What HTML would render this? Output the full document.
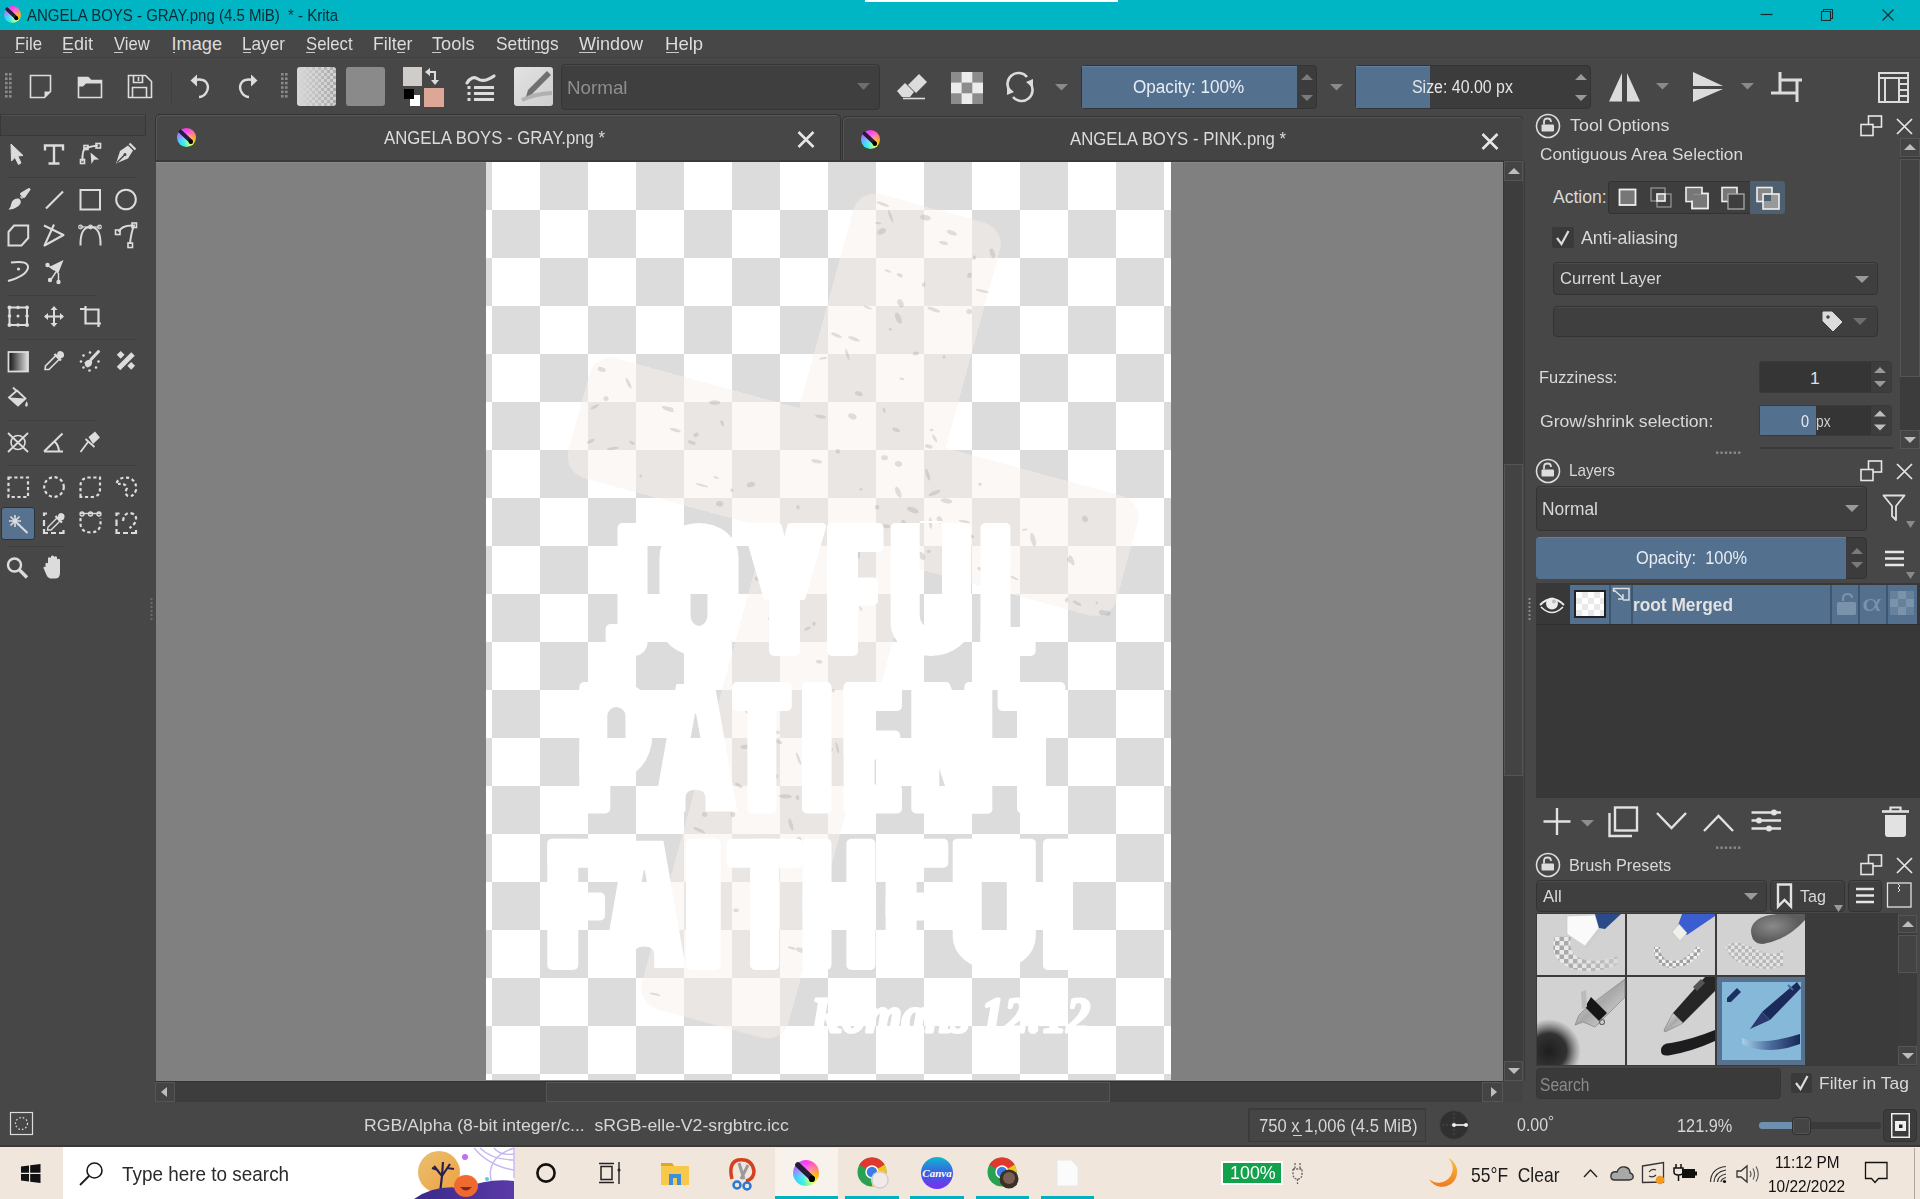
<!DOCTYPE html>
<html><head><meta charset="utf-8">
<style>
*{margin:0;padding:0;box-sizing:border-box}
html,body{width:1920px;height:1199px;overflow:hidden;background:#474747;font-family:"Liberation Sans",sans-serif;color:#dedede;position:relative}
.a{position:absolute}
svg{position:absolute;overflow:visible}
.t{position:absolute;white-space:pre;line-height:1;transform-origin:0 0}
</style></head><body>
<div class="a" style="left:0px;top:0px;width:1920px;height:30px;background:#00b6c4;"></div>
<div class="a" style="left:865px;top:0px;width:253px;height:2px;background:#ffffff;"></div>
<div class="a" style="left:0px;top:30px;width:1920px;height:84px;background:#474747;"></div>
<div class="a" style="left:0px;top:57px;width:1920px;height:1px;background:#404040;"></div>
<div class="a" style="left:3.5px;top:6.0px;width:17.0px;height:17.0px;border-radius:50%;background:conic-gradient(from 0deg,#ff38f0 0deg,#ff7a90 60deg,#ffc000 110deg,#f0ff60 140deg,#30f0e0 200deg,#40d0ff 240deg,#9a80ff 290deg,#ff38f0 360deg)"></div>
<div class="a" style="left:3.5px;top:6.0px;width:17.0px;height:17.0px;border-radius:50%;background:radial-gradient(circle at 50% 50%,rgba(255,255,255,.35),rgba(255,255,255,0) 60%)"></div>
<svg style="left:-0.5px;top:2.0px;" width="25.0" height="25.0" viewBox="0 0 25.0 25.0"><path d="M7.2 7.2 L16.3 15.9" stroke="#2a1a3a" stroke-width="3.57" stroke-linecap="round"/><circle cx="16.3" cy="16.3" r="2.04" fill="#000"/></svg>
<div class="t" style="left:27.00px;top:7.86px;font-size:16.7px;color:#0a2a33;font-weight:400;font-family:'Liberation Sans',sans-serif;transform:scaleX(0.8983);">ANGELA BOYS - GRAY.png (4.5 MiB)  * - Krita</div>
<svg style="left:1755px;top:0px;" width="150" height="30" viewBox="0 0 150 30"><path d="M5.5 14.5H17.5" stroke="#1a2a30" stroke-width="1.2"/>
<path d="M66.5 11.5h9v9h-9z M68.5 11.5v-2h9v9h-2" fill="none" stroke="#1a2a30" stroke-width="1.1"/>
<path d="M127.5 9.5L138.5 20.5M138.5 9.5L127.5 20.5" stroke="#1a2a30" stroke-width="1.2"/></svg>
<div class="t" style="left:15.08px;top:34.79px;font-size:18.2px;color:#dcdcdc;font-weight:400;font-family:'Liberation Sans',sans-serif;transform:scaleX(0.9223);">File</div>
<div class="t" style="left:62.01px;top:34.79px;font-size:18.2px;color:#dcdcdc;font-weight:400;font-family:'Liberation Sans',sans-serif;transform:scaleX(0.9905);">Edit</div>
<div class="t" style="left:114.00px;top:34.79px;font-size:18.2px;color:#dcdcdc;font-weight:400;font-family:'Liberation Sans',sans-serif;transform:scaleX(0.9135);">View</div>
<div class="t" style="left:171.50px;top:34.79px;font-size:18.2px;color:#dcdcdc;font-weight:400;font-family:'Liberation Sans',sans-serif;">Image</div>
<div class="t" style="left:242.05px;top:34.79px;font-size:18.2px;color:#dcdcdc;font-weight:400;font-family:'Liberation Sans',sans-serif;transform:scaleX(0.9451);">Layer</div>
<div class="t" style="left:306.00px;top:34.79px;font-size:18.2px;color:#dcdcdc;font-weight:400;font-family:'Liberation Sans',sans-serif;transform:scaleX(0.9209);">Select</div>
<div class="t" style="left:373.02px;top:34.79px;font-size:18.2px;color:#dcdcdc;font-weight:400;font-family:'Liberation Sans',sans-serif;transform:scaleX(0.9782);">Filter</div>
<div class="t" style="left:432.00px;top:34.79px;font-size:18.2px;color:#dcdcdc;font-weight:400;font-family:'Liberation Sans',sans-serif;transform:scaleX(1.0032);">Tools</div>
<div class="t" style="left:495.50px;top:34.79px;font-size:18.2px;color:#dcdcdc;font-weight:400;font-family:'Liberation Sans',sans-serif;transform:scaleX(0.9524);">Settings</div>
<div class="t" style="left:579.00px;top:34.79px;font-size:18.2px;color:#dcdcdc;font-weight:400;font-family:'Liberation Sans',sans-serif;transform:scaleX(0.9916);">Window</div>
<div class="t" style="left:664.98px;top:34.79px;font-size:18.2px;color:#dcdcdc;font-weight:400;font-family:'Liberation Sans',sans-serif;transform:scaleX(1.0196);">Help</div>
<div class="a" style="left:15px;top:52px;width:9px;height:1px;background:#c8c8c8;"></div>
<div class="a" style="left:63px;top:52px;width:9px;height:1px;background:#c8c8c8;"></div>
<div class="a" style="left:114px;top:52px;width:9px;height:1px;background:#c8c8c8;"></div>
<div class="a" style="left:173px;top:52px;width:2px;height:1px;background:#c8c8c8;"></div>
<div class="a" style="left:243px;top:52px;width:8px;height:1px;background:#c8c8c8;"></div>
<div class="a" style="left:306px;top:52px;width:9px;height:1px;background:#c8c8c8;"></div>
<div class="a" style="left:397px;top:52px;width:8px;height:1px;background:#c8c8c8;"></div>
<div class="a" style="left:432px;top:52px;width:9px;height:1px;background:#c8c8c8;"></div>
<div class="a" style="left:535px;top:52px;width:10px;height:1px;background:#c8c8c8;"></div>
<div class="a" style="left:579px;top:52px;width:17px;height:1px;background:#c8c8c8;"></div>
<div class="a" style="left:666px;top:52px;width:13px;height:1px;background:#c8c8c8;"></div>
<svg style="left:5px;top:73px;" width="10" height="28" viewBox="0 0 10 28"><rect x="0" y="0.0" width="2.6" height="2.6" fill="#8a8a8a"/><rect x="4" y="0.0" width="2.6" height="2.6" fill="#8a8a8a"/><rect x="0" y="4.4" width="2.6" height="2.6" fill="#8a8a8a"/><rect x="4" y="4.4" width="2.6" height="2.6" fill="#8a8a8a"/><rect x="0" y="8.8" width="2.6" height="2.6" fill="#8a8a8a"/><rect x="4" y="8.8" width="2.6" height="2.6" fill="#8a8a8a"/><rect x="0" y="13.2" width="2.6" height="2.6" fill="#8a8a8a"/><rect x="4" y="13.2" width="2.6" height="2.6" fill="#8a8a8a"/><rect x="0" y="17.6" width="2.6" height="2.6" fill="#8a8a8a"/><rect x="4" y="17.6" width="2.6" height="2.6" fill="#8a8a8a"/><rect x="0" y="22.0" width="2.6" height="2.6" fill="#8a8a8a"/><rect x="4" y="22.0" width="2.6" height="2.6" fill="#8a8a8a"/></svg>
<svg style="left:29px;top:74px;" width="24" height="26" viewBox="0 0 24 26"><path d="M1.5 1.5H21.5V17.5L15.5 23.5H1.5Z" fill="none" stroke="#dcdcdc" stroke-width="1.6"/><path d="M21.5 17.5H15.5V23.5Z" fill="#dcdcdc"/></svg>
<svg style="left:77px;top:74px;" width="26" height="26" viewBox="0 0 26 26"><path d="M1.5 3.5H11L14 6.5H24.5V23.5H1.5Z" fill="none" stroke="#dcdcdc" stroke-width="1.6"/><path d="M1.5 3.5H11L14 6.5H24.5V9.5H9L6 12.5H1.5Z" fill="#dcdcdc"/></svg>
<svg style="left:127px;top:74px;" width="26" height="26" viewBox="0 0 26 26"><path d="M1.5 1.5H18.5L24.5 7.5V23.5H1.5Z" fill="none" stroke="#dcdcdc" stroke-width="1.6"/><path d="M6.5 1.5V8.5H15.5V1.5M11.5 3V7M5.5 23.5V13.5H19.5V23.5" fill="none" stroke="#dcdcdc" stroke-width="1.6"/></svg>
<div class="a" style="left:171px;top:72px;width:1px;height:31px;background:#3e3e3e;"></div>
<svg style="left:189px;top:72px;" width="24" height="28" viewBox="0 0 24 28"><path d="M4 8.5 Q13 6 17 10 Q21 15 17 21 Q14 25 10 25" fill="none" stroke="#dcdcdc" stroke-width="2.4"/><path d="M1.5 8.5L8 2.5V14.5Z" fill="#dcdcdc"/></svg>
<svg style="left:237px;top:72px;" width="24" height="28" viewBox="0 0 24 28"><path d="M18 8.5 Q9 6 5 10 Q1 15 5 21 Q8 25 12 25" fill="none" stroke="#dcdcdc" stroke-width="2.4"/><path d="M20.5 8.5L14 2.5V14.5Z" fill="#dcdcdc"/></svg>
<svg style="left:281px;top:73px;" width="10" height="28" viewBox="0 0 10 28"><rect x="0" y="0.0" width="2.6" height="2.6" fill="#8a8a8a"/><rect x="4" y="0.0" width="2.6" height="2.6" fill="#8a8a8a"/><rect x="0" y="4.4" width="2.6" height="2.6" fill="#8a8a8a"/><rect x="4" y="4.4" width="2.6" height="2.6" fill="#8a8a8a"/><rect x="0" y="8.8" width="2.6" height="2.6" fill="#8a8a8a"/><rect x="4" y="8.8" width="2.6" height="2.6" fill="#8a8a8a"/><rect x="0" y="13.2" width="2.6" height="2.6" fill="#8a8a8a"/><rect x="4" y="13.2" width="2.6" height="2.6" fill="#8a8a8a"/><rect x="0" y="17.6" width="2.6" height="2.6" fill="#8a8a8a"/><rect x="4" y="17.6" width="2.6" height="2.6" fill="#8a8a8a"/><rect x="0" y="22.0" width="2.6" height="2.6" fill="#8a8a8a"/><rect x="4" y="22.0" width="2.6" height="2.6" fill="#8a8a8a"/></svg>
<div class="a" style="left:297px;top:67px;width:39px;height:39px;border-radius:3px;background-color:#d2d2d2;background-image:linear-gradient(90deg,rgba(215,215,215,1) 0%,rgba(215,215,215,0) 100%),linear-gradient(45deg,#a8a8a8 25%,transparent 25%,transparent 75%,#a8a8a8 75%),linear-gradient(45deg,#a8a8a8 25%,transparent 25%,transparent 75%,#a8a8a8 75%);background-size:100% 100%,6px 6px,6px 6px;background-position:0 0,0 0,3px 3px"></div>
<div class="a" style="left:346px;top:67px;width:39px;height:39px;background:#8a8a8a;border-radius:3px"></div>
<div class="a" style="left:403px;top:67px;width:19px;height:19px;background:#cfccca;"></div>
<div class="a" style="left:424px;top:88px;width:20px;height:19px;background:#dca797;"></div>
<div class="a" style="left:404px;top:89px;width:10px;height:10px;background:#000;"></div>
<div class="a" style="left:410px;top:95px;width:10px;height:11px;background:#fff;box-shadow:0 0 0 0 #000"></div>
<div class="a" style="left:404px;top:89px;width:10px;height:10px;background:#000;"></div>
<svg style="left:424px;top:67px;" width="20" height="20" viewBox="0 0 20 20"><path d="M3 5H11V13" fill="none" stroke="#dcdcdc" stroke-width="2"/><path d="M1 5L6 1V9Z M11 18L7 13H15Z" fill="#dcdcdc"/></svg>
<svg style="left:466px;top:72px;" width="30" height="30" viewBox="0 0 30 30"><path d="M1 11 Q6 3 12 7 Q18 11 28 4" fill="none" stroke="#dcdcdc" stroke-width="3.2" stroke-linecap="round"/><rect x="1.5" y="14" width="3" height="3" fill="#dcdcdc"/><rect x="1.5" y="20" width="3" height="3" fill="#dcdcdc"/><rect x="1.5" y="26" width="3" height="3" fill="#dcdcdc"/><rect x="8" y="14" width="20" height="3" fill="#dcdcdc"/><rect x="8" y="20" width="20" height="3" fill="#dcdcdc"/><rect x="8" y="26" width="20" height="3" fill="#dcdcdc"/></svg>
<div class="a" style="left:514px;top:67px;width:39px;height:39px;border-radius:3px;background:linear-gradient(135deg,#e2e2e2,#cfcfcf)"></div>
<svg style="left:514px;top:67px;" width="39" height="39" viewBox="0 0 39 39"><path d="M14 23 L33 4 L37 8 L18 27 L12 30Z" fill="#707070"/><path d="M8 33 Q20 27 38 26" fill="none" stroke="#9a9a9a" stroke-width="4" opacity=".6"/></svg>
<div class="a" style="left:561px;top:64px;width:319px;height:46px;background:#3f3f3f;border:1px solid #353535;border-radius:4px;box-shadow:inset 0 1px 0 #4a4a4a"></div>
<div class="t" style="left:567.01px;top:77.67px;font-size:19px;color:#8e8e8e;font-weight:400;font-family:'Liberation Sans',sans-serif;transform:scaleX(0.9880);">Normal</div>
<svg style="left:857px;top:83px;" width="14" height="8" viewBox="0 0 14 8"><path d="M0 0H13L6.5 7Z" fill="#6e6e6e"/></svg>
<svg style="left:896px;top:72px;" width="31" height="29" viewBox="0 0 31 29"><path d="M12 13 L23 2 L31 10 L20 21Z" fill="#dcdcdc"/><path d="M1 19 L9 11 L18 20 L14 25 L6 25Z" fill="#dcdcdc"/><path d="M7 26.5H29" stroke="#dcdcdc" stroke-width="1.6"/></svg>
<svg style="left:951px;top:72px;" width="32" height="32" viewBox="0 0 32 32"><rect width="32" height="32" fill="#ececec"/><rect x="0" y="0" width="10.6" height="10.6" fill="#8c8c8c"/><rect x="21.3" y="0" width="10.7" height="10.6" fill="#8c8c8c"/><rect x="10.6" y="10.6" width="10.7" height="10.7" fill="#8c8c8c"/><rect x="0" y="21.3" width="10.6" height="10.7" fill="#8c8c8c"/><rect x="21.3" y="21.3" width="10.7" height="10.7" fill="#8c8c8c"/></svg>
<svg style="left:1005px;top:72px;" width="30" height="30" viewBox="0 0 30 30"><path d="M5 19 A11 11 0 0 1 22 5" fill="none" stroke="#dcdcdc" stroke-width="2.6"/><path d="M25 11 A11 11 0 0 1 8 25" fill="none" stroke="#dcdcdc" stroke-width="2.6"/><path d="M2 14 L9 20 L2 23Z" fill="#dcdcdc"/><path d="M28 16 L21 10 L28 7Z" fill="#dcdcdc"/></svg>
<svg style="left:1055px;top:84px;" width="14" height="7" viewBox="0 0 14 7"><path d="M0 0H13L6.5 6.5Z" fill="#8a8a8a"/></svg>
<div class="a" style="left:1081px;top:65px;width:236px;height:44px;background:#3c3c3c;border-radius:4px;border:1px solid #333"></div>
<div class="a" style="left:1082px;top:66px;width:215px;height:42px;background:#53718f;border-top:1px solid #6180a0"></div>
<div class="t" style="left:1133.00px;top:77.84px;font-size:18.8px;color:#e8eef4;font-weight:400;font-family:'Liberation Sans',sans-serif;transform:scaleX(0.9114);">Opacity: 100%</div>
<svg style="left:1300px;top:71px;" width="14" height="34" viewBox="0 0 14 34"><path d="M1 9L7 3L13 9Z M1 24L7 30L13 24Z" fill="#7a7a7a"/></svg>
<svg style="left:1330px;top:84px;" width="14" height="7" viewBox="0 0 14 7"><path d="M0 0H13L6.5 6.5Z" fill="#8a8a8a"/></svg>
<div class="a" style="left:1355px;top:65px;width:236px;height:44px;background:#3c3c3c;border-radius:4px;border:1px solid #333"></div>
<div class="a" style="left:1356px;top:66px;width:74px;height:42px;background:#53718f;border-top:1px solid #6180a0"></div>
<div class="t" style="left:1412.00px;top:77.99px;font-size:18.8px;color:#e6e6e6;font-weight:400;font-family:'Liberation Sans',sans-serif;transform:scaleX(0.8476);">Size: 40.00 px</div>
<svg style="left:1574px;top:71px;" width="14" height="34" viewBox="0 0 14 34"><path d="M1 9L7 3L13 9Z M1 24L7 30L13 24Z" fill="#9a9a9a"/></svg>
<svg style="left:1608px;top:72px;" width="33" height="31" viewBox="0 0 33 31"><path d="M1 29.5 L14 1 V29.5Z M19 29.5 V1 L32 29.5Z" fill="#dcdcdc"/></svg>
<svg style="left:1656px;top:83px;" width="14" height="7" viewBox="0 0 14 7"><path d="M0 0H13L6.5 6.5Z" fill="#8a8a8a"/></svg>
<svg style="left:1693px;top:72px;" width="31" height="31" viewBox="0 0 31 31"><path d="M0 0 L30 14 H0Z M0 17 H30 L0 30Z" fill="#dcdcdc"/></svg>
<svg style="left:1741px;top:83px;" width="14" height="7" viewBox="0 0 14 7"><path d="M0 0H13L6.5 6.5Z" fill="#8a8a8a"/></svg>
<svg style="left:1771px;top:72px;" width="32" height="31" viewBox="0 0 32 31"><path d="M9 0V21H0 M9 21H26 M26 8V30 M9 8H31" fill="none" stroke="#dcdcdc" stroke-width="3"/></svg>
<svg style="left:1878px;top:72px;" width="31" height="31" viewBox="0 0 31 31"><rect x="1" y="1" width="29" height="29" fill="none" stroke="#dcdcdc" stroke-width="2"/><path d="M1 6H30 M7 6V30 M21 6V30 M21 12H30 M21 18H30 M21 24H30" stroke="#dcdcdc" stroke-width="2" fill="none"/></svg>
<div class="a" style="left:0px;top:114px;width:146px;height:22px;background:#444444;border:1px solid #383838;border-top-color:#3a3a3a;box-shadow:inset 0 1px 0 #505050"></div>
<div class="a" style="left:8px;top:177px;width:128px;height:1px;background:#3e3e3e;"></div>
<div class="a" style="left:8px;top:295px;width:88px;height:1px;background:#3e3e3e;"></div>
<div class="a" style="left:8px;top:339px;width:128px;height:1px;background:#3e3e3e;"></div>
<div class="a" style="left:8px;top:420px;width:88px;height:1px;background:#3e3e3e;"></div>
<div class="a" style="left:8px;top:465px;width:128px;height:1px;background:#3e3e3e;"></div>
<div class="a" style="left:8px;top:546px;width:56px;height:1px;background:#3e3e3e;"></div>
<div class="a" style="left:1px;top:507px;width:34px;height:33px;background:#56728f;border:1px solid #2a3440;border-radius:3px"></div>
<svg style="left:0;top:0" width="156" height="600" viewBox="0 0 156 600"><g fill="none" stroke="#dcdcdc" stroke-width="2">
<path d="M11 144 L11.5 161 L15 157.5 L18.5 164.5 L21 163 L17.8 156 L23 155.5Z" fill="#dcdcdc" stroke-width="1"/>
<path d="M45 150.5V145.5H63V150.5 M54 145.5V163.5 M48.5 163.5H59.5" stroke-width="2.4"/>
<path d="M82.5 161.5 Q82 149 86 148 Q92 146 98 145.5"/>
<rect x="80.5" y="159.5" width="4" height="4" stroke-width="1.6"/><rect x="84" y="145.5" width="4" height="4" stroke-width="1.6"/><rect x="96" y="143.5" width="4.5" height="4.5" stroke-width="1.6"/>
<path d="M90.5 152.5 L99 159.5 L94 159.8 L91.5 164Z" fill="#dcdcdc" stroke="none"/>
<path d="M116 163.5 L120 151 L128 145.5 L133 150.5 L128 158.5 Z" fill="#dcdcdc" stroke="none"/>
<path d="M129.5 143.5 L135.5 149.5" stroke-width="2.2"/>
<path d="M117 162.5 L124.5 155" stroke="#474747" stroke-width="1.4"/>
<circle cx="125" cy="154.5" r="1.5" fill="#474747" stroke="none"/>
<path d="M29 189.5 L24 196.5 L21.5 194 Z" fill="#dcdcdc" stroke="#dcdcdc" stroke-width="3" stroke-linejoin="round"/>
<path d="M20.5 196.5 L22.5 198.5" stroke-width="1.6"/>
<path d="M19 198.5 Q23 202 18.5 206 Q13 210 8.5 209.5 Q11 207 11.5 203 Q13 198 19 198.5Z" fill="#dcdcdc" stroke="none"/>
<path d="M46 208.5 L63 191.5" stroke-width="2.2"/>
<rect x="80.5" y="190" width="19.5" height="19.5"/>
<circle cx="126" cy="199.5" r="9.8"/>
<path d="M8.5 232 L14 225.5 H28.2 V238 L21.5 245.5 H8.5Z"/>
<path d="M44 225.5 L63.5 235 L44.5 245.5 L54 224.5" stroke-linejoin="round"/>
<path d="M80.5 245.5 Q80 227 90.5 227 Q101 227 100.5 245.5"/>
<path d="M80 227 H100" stroke-width="1.2"/>
<circle cx="80.5" cy="227" r="1.8" stroke-width="1.2"/><circle cx="90.5" cy="227" r="1.8" stroke-width="1.2"/><circle cx="99.5" cy="227" r="1.8" stroke-width="1.2"/>
<path d="M119 232 Q121 225 134 225.5 Q131 233 130 244"/>
<rect x="115.5" y="230" width="4.5" height="4.5" stroke-width="1.6"/><rect x="132" y="223" width="4.5" height="4.5" stroke-width="1.6"/><rect x="128" y="243" width="4.5" height="4.5" stroke-width="1.6"/>
<path d="M11 262.5 Q29 260 28 268 Q26 276 8 281" stroke-width="2"/>
<circle cx="18.5" cy="269" r="1.6" fill="#dcdcdc" stroke="none"/>
<path d="M63.5 260 L58 274 L54 270 Z M63.5 260 L49 267 L54 270Z" fill="#dcdcdc" stroke="none"/>
<path d="M54 270 L47 264.5 M56 272 L50 281 M58.5 273 L58.5 282" stroke-width="1.4"/>
<circle cx="47.5" cy="265" r="2.2" fill="#dcdcdc" stroke="none"/><circle cx="50" cy="280" r="2.2" fill="#dcdcdc" stroke="none"/><circle cx="58.5" cy="282" r="2.2" fill="#dcdcdc" stroke="none"/>
<rect x="9.5" y="307.5" width="17.5" height="17.5"/>
<g fill="#dcdcdc" stroke="none"><circle cx="9.5" cy="307.5" r="2"/><circle cx="27" cy="307.5" r="2"/><circle cx="9.5" cy="325" r="2"/><circle cx="27" cy="325" r="2"/><circle cx="18" cy="307.5" r="1.8"/><circle cx="18" cy="325" r="1.8"/><circle cx="9.5" cy="316" r="1.8"/><circle cx="27" cy="316" r="1.8"/><circle cx="18" cy="316" r="1.5"/></g>
<path d="M54 307.5 V325.5 M45 316.5 H63" stroke-width="2"/>
<path d="M54 306 L50.5 310 H57.5Z M54 327 L50.5 323 H57.5Z M44 316.5 L48 313 V320Z M64 316.5 L60 313 V320Z" fill="#dcdcdc" stroke="none"/>
<path d="M80 309 H85.5 V306 M85.5 309 V323.5 H101 M85.5 309.5 H98.5 V327" stroke-width="2.2"/>
</g></svg>
<svg style="left:0;top:0" width="156" height="600" viewBox="0 0 156 600"><defs><linearGradient id="gr1" x1="0" y1="0" x2="1" y2="0"><stop offset="0" stop-color="#111"/><stop offset="1" stop-color="#e0e0e0"/></linearGradient></defs>
<g fill="none" stroke="#dcdcdc" stroke-width="2">
<rect x="8.5" y="352" width="19.5" height="19.5" fill="url(#gr1)" stroke-width="1.8"/>
<path d="M45 369.5 L45.5 366 L56 355.5 L59.5 359 L49 369.5Z" stroke-width="1.6"/>
<path d="M54.5 354 L61 360.5" stroke-width="2.4"/>
<path d="M57.5 357 Q56 351.5 60 351 Q64.5 351.5 64 355.5 Q63.5 359 59 358" fill="#dcdcdc" stroke="none"/>
<path d="M84.5 362.5 Q88 358 92 361 Q93 366 87.5 367.5 Q85 367 84.5 362.5Z" fill="#dcdcdc" stroke="none"/>
<path d="M91 359.5 L98.5 351.5" stroke-width="3" stroke-linecap="round"/>
<g fill="#dcdcdc" stroke="none"><circle cx="90" cy="352.5" r="1.3"/><circle cx="83.5" cy="355.5" r="1.3"/><circle cx="81" cy="361.5" r="1.3"/><circle cx="83.5" cy="367.5" r="1.3"/><circle cx="89.5" cy="370.5" r="1.3"/><circle cx="96" cy="367.5" r="1.3"/><circle cx="98.5" cy="361.5" r="1.3"/></g>
<path d="M118.5 368.5 L133 354" stroke-width="5"/>
<rect x="118" y="352" width="5.5" height="5.5" fill="#dcdcdc" stroke="none" transform="rotate(45 120.7 354.7)"/>
<rect x="128.5" y="363" width="5.5" height="5.5" fill="#dcdcdc" stroke="none" transform="rotate(45 131.2 365.7)"/>
<path d="M9 397.5 L17 390.5 L25.5 398.5 L18 405.5Z" stroke-width="1.8"/>
<path d="M9 397.5 L25.5 398.5 L18 405.5Z" fill="#dcdcdc" stroke="none"/>
<path d="M13 387.5 L17 391.5" stroke-width="1.8"/>
<path d="M26.5 401 Q28.5 404 27.5 406 Q26 407.5 25 405.5Z" fill="#dcdcdc" stroke="none"/>
<circle cx="18" cy="442.5" r="7" stroke-width="1.6"/>
<path d="M8 433 L28 452 M28 433 L8 452" stroke-width="1.8"/>
<path d="M44 451.5 H63 M44 451.5 L62.5 433.5 M54.5 441.5 Q58.5 445 59 451" stroke-width="2"/>
<path d="M88.5 437 L95 431.5 L100 437.5 L93 444 Z" fill="#dcdcdc" stroke="none"/>
<path d="M85.5 439 L94.5 447 M88 442 L80.5 452" stroke-width="1.8"/>
</g>
<g fill="none" stroke="#dcdcdc" stroke-width="2.2" stroke-dasharray="3.2 2.6">
<rect x="8.5" y="477.5" width="19.5" height="19.5"/>
<circle cx="54" cy="487" r="9.8"/>
<path d="M80.5 497 V486 Q80.5 477.5 89 477.5 H100 V489 Q100 497 91 497 Z"/>
<path d="M116.5 483 Q120 476 130 478 Q137 482 136 490 Q134 497 128 496 Q124 494 127 488 Q126 483 118 484"/>
</g>
<g fill="none" stroke="#dcdcdc" stroke-width="2.2">
<path d="M9 521 H21 M15 515 V527 M10.5 516.5 L19.5 525.5 M19.5 516.5 L10.5 525.5" stroke-width="1.6"/>
<path d="M17 523 L27.5 533" stroke-width="2"/>
<path d="M44 516 V513.5 H47 M44 520 V526 M44 529 V533 H48 M51 533 H56 M59 533 H63.5 V530" stroke-dasharray="none"/>
<path d="M47.5 530 L48 527 L57 518 L60 521 L51 530Z" stroke-width="1.4"/>
<path d="M55.5 516 L62 522.5" stroke-width="2.2"/>
<path d="M58 519 Q57 513.5 61 513 Q65 513.5 64.5 517 Q64 521 60 520" fill="#dcdcdc" stroke="none"/>
<path d="M80.5 513.5 H101" stroke-width="1.4"/>
<circle cx="82" cy="514" r="2" stroke-width="1.3"/><circle cx="90.5" cy="514" r="2" stroke-width="1.3"/><circle cx="99" cy="514" r="2" stroke-width="1.3"/>
<path d="M80.5 518 V524 Q81 532 90.5 532.5 Q100 532 100.5 524 V518" stroke-dasharray="3.2 2.6"/>
<path d="M116.5 516 V513.5 H119.5 M116.5 519.5 V526 M116.5 529 V533 H120 M123 533 H128 M131 533 H136 V530" />
<path d="M123 521 Q124 513 130 513 Q137 514 136 521 Q134 525 129.5 528" stroke-dasharray="3.5 2.5"/>
<circle cx="14.5" cy="565" r="6.5" stroke-width="2.4"/>
<path d="M19.5 570 L27 577.5" stroke-width="3.4"/>
</g>
<path d="M45.5 567 L45.5 563.5 Q47 562 48 563.5 V557.8 Q49.5 556.5 51 557.8 V562 V556.2 Q52.5 554.8 54 556.2 V562 V557 Q55.5 555.5 57 557 V563 V559.5 Q58.5 558 60 559.5 V573 Q60 578.5 55 578.5 H50 Q47.5 578 46.5 575 L43.5 568 Q43.5 566 45.5 567Z" fill="#dcdcdc"/>
</svg>
<svg style="left:150px;top:598px;" width="4" height="26" viewBox="0 0 4 26"><rect x="0.5" y="0" width="2" height="2" fill="#6a6a6a"/><rect x="0.5" y="4" width="2" height="2" fill="#6a6a6a"/><rect x="0.5" y="8" width="2" height="2" fill="#6a6a6a"/><rect x="0.5" y="12" width="2" height="2" fill="#6a6a6a"/><rect x="0.5" y="16" width="2" height="2" fill="#6a6a6a"/><rect x="0.5" y="20" width="2" height="2" fill="#6a6a6a"/></svg>
<div class="a" style="left:155px;top:114px;width:686px;height:48px;background:#474747;border:1px solid #333;border-bottom:none;border-radius:5px 5px 0 0;box-shadow:inset 1px 1px 0 #585858"></div>
<div class="a" style="left:842px;top:116px;width:682px;height:46px;background:#444444;border:1px solid #333;border-bottom:none;border-radius:5px 5px 0 0;box-shadow:inset 1px 1px 0 #555"></div>
<div class="a" style="left:176.5px;top:127.5px;width:19.0px;height:19.0px;border-radius:50%;background:conic-gradient(from 0deg,#ff38f0 0deg,#ff7a90 60deg,#ffc000 110deg,#f0ff60 140deg,#30f0e0 200deg,#40d0ff 240deg,#9a80ff 290deg,#ff38f0 360deg)"></div>
<div class="a" style="left:176.5px;top:127.5px;width:19.0px;height:19.0px;border-radius:50%;background:radial-gradient(circle at 50% 50%,rgba(255,255,255,.35),rgba(255,255,255,0) 60%)"></div>
<svg style="left:172.5px;top:123.5px;" width="27.0" height="27.0" viewBox="0 0 27.0 27.0"><path d="M7.6 7.6 L17.8 17.3" stroke="#2a1a3a" stroke-width="3.99" stroke-linecap="round"/><circle cx="17.8" cy="17.8" r="2.28" fill="#000"/></svg>
<div class="a" style="left:860.5px;top:129.5px;width:19.0px;height:19.0px;border-radius:50%;background:conic-gradient(from 0deg,#ff38f0 0deg,#ff7a90 60deg,#ffc000 110deg,#f0ff60 140deg,#30f0e0 200deg,#40d0ff 240deg,#9a80ff 290deg,#ff38f0 360deg)"></div>
<div class="a" style="left:860.5px;top:129.5px;width:19.0px;height:19.0px;border-radius:50%;background:radial-gradient(circle at 50% 50%,rgba(255,255,255,.35),rgba(255,255,255,0) 60%)"></div>
<svg style="left:856.5px;top:125.5px;" width="27.0" height="27.0" viewBox="0 0 27.0 27.0"><path d="M7.6 7.6 L17.8 17.3" stroke="#2a1a3a" stroke-width="3.99" stroke-linecap="round"/><circle cx="17.8" cy="17.8" r="2.28" fill="#000"/></svg>
<div class="t" style="left:383.70px;top:128.70px;font-size:18.9px;color:#dcdcdc;font-weight:400;font-family:'Liberation Sans',sans-serif;transform:scaleX(0.8873);">ANGELA BOYS - GRAY.png *</div>
<div class="t" style="left:1070.40px;top:130.00px;font-size:18.9px;color:#dcdcdc;font-weight:400;font-family:'Liberation Sans',sans-serif;transform:scaleX(0.8868);">ANGELA BOYS - PINK.png *</div>
<svg style="left:796px;top:130px;" width="22" height="20" viewBox="0 0 22 20"><path d="M2.5 2 L17.5 17 M17.5 2 L2.5 17" stroke="#e6e6e6" stroke-width="2.6"/></svg>
<svg style="left:1480px;top:132px;" width="22" height="20" viewBox="0 0 22 20"><path d="M2.5 2 L17.5 17 M17.5 2 L2.5 17" stroke="#e6e6e6" stroke-width="2.6"/></svg>
<div class="a" style="left:155px;top:160px;width:1369px;height:2px;background:#3a3a3a;"></div>
<div class="a" style="left:156px;top:162px;width:1347px;height:919px;background:#808080;"></div>
<div class="a" style="left:156px;top:162px;width:1347px;height:1px;background:#8a8a8a;"></div>
<div class="a" style="left:486px;top:162px;width:685px;height:918px;background-color:#fff;background-image:linear-gradient(45deg,#dcdcdc 25%,transparent 25%,transparent 75%,#dcdcdc 75%),linear-gradient(45deg,#dcdcdc 25%,transparent 25%,transparent 75%,#dcdcdc 75%);background-size:96px 96px;background-position:6px 0,54px 48px"></div>
<div class="a" style="left:1503px;top:160px;width:20px;height:921px;background:#3d3d3d;border-left:1px solid #363636"></div>
<div class="a" style="left:1504px;top:161px;width:19px;height:20px;background:#444;border:1px solid #555"></div>
<svg style="left:1506px;top:166px;" width="16" height="10" viewBox="0 0 16 10"><path d="M2 8 L8 2 L14 8Z" fill="#bdbdbd"/></svg>
<div class="a" style="left:1504px;top:464px;width:19px;height:312px;background:#434343;border:1px solid #555"></div>
<div class="a" style="left:1504px;top:1061px;width:19px;height:20px;background:#444;border:1px solid #555"></div>
<svg style="left:1506px;top:1066px;" width="16" height="10" viewBox="0 0 16 10"><path d="M2 2 L8 8 L14 2Z" fill="#bdbdbd"/></svg>
<div class="a" style="left:155px;top:1081px;width:1348px;height:21px;background:#3d3d3d;border-top:1px solid #333"></div>
<div class="a" style="left:155px;top:1082px;width:20px;height:20px;background:#444;border:1px solid #555"></div>
<svg style="left:157px;top:1084px;" width="16" height="16" viewBox="0 0 16 16"><path d="M10 3 L4 8 L10 13Z" fill="#bdbdbd"/></svg>
<div class="a" style="left:546px;top:1082px;width:564px;height:20px;background:#434343;border:1px solid #555"></div>
<div class="a" style="left:1482px;top:1082px;width:21px;height:20px;background:#444;border:1px solid #555"></div>
<svg style="left:1485px;top:1084px;" width="16" height="16" viewBox="0 0 16 16"><path d="M6 3 L12 8 L6 13Z" fill="#bdbdbd"/></svg>
<div class="a" style="left:1503px;top:1081px;width:20px;height:21px;background:#444;"></div>
<div class="a" style="left:1523px;top:114px;width:11px;height:988px;background:#474747;"></div>
<div class="a" style="left:1524px;top:162px;width:1px;height:919px;background:#3b3b3b;"></div>
<svg style="left:1528px;top:598px;" width="4" height="26" viewBox="0 0 4 26"><rect x="0.5" y="0" width="2" height="2" fill="#8a8a8a"/><rect x="0.5" y="4" width="2" height="2" fill="#8a8a8a"/><rect x="0.5" y="8" width="2" height="2" fill="#8a8a8a"/><rect x="0.5" y="12" width="2" height="2" fill="#8a8a8a"/><rect x="0.5" y="16" width="2" height="2" fill="#8a8a8a"/><rect x="0.5" y="20" width="2" height="2" fill="#8a8a8a"/></svg>
<svg style="left:486px;top:162px;overflow:hidden" width="685" height="918" viewBox="0 0 685 918"><g fill="#f8f0ea" opacity="0.5"><rect x="259.0" y="31.5" width="152" height="845" rx="22" transform="rotate(15.3 335.0 454.0)"/><rect x="83.0" y="263.0" width="568" height="124" rx="22" transform="rotate(15.2 367.0 325.0)"/></g>
<g fill="#9a928c" opacity="0.28"><ellipse cx="457.6" cy="81.0" rx="4.4" ry="1.7" transform="rotate(15 457.6 81.0)"/><ellipse cx="395.6" cy="69.4" rx="4.6" ry="2.7" transform="rotate(-26 395.6 69.4)"/><ellipse cx="127.0" cy="286.4" rx="6.0" ry="1.3" transform="rotate(-8 127.0 286.4)"/><ellipse cx="104.8" cy="279.2" rx="4.2" ry="1.6" transform="rotate(-26 104.8 279.2)"/><ellipse cx="313.2" cy="676.7" rx="2.3" ry="1.9" transform="rotate(16 313.2 676.7)"/><ellipse cx="264.9" cy="322.7" rx="4.2" ry="2.4" transform="rotate(-14 264.9 322.7)"/><ellipse cx="465.8" cy="70.8" rx="5.4" ry="2.2" transform="rotate(21 465.8 70.8)"/><ellipse cx="189.3" cy="268.1" rx="5.6" ry="1.7" transform="rotate(15 189.3 268.1)"/><ellipse cx="276.4" cy="787.2" rx="6.8" ry="1.3" transform="rotate(10 276.4 787.2)"/><ellipse cx="400.7" cy="364.3" rx="3.7" ry="1.9" transform="rotate(9 400.7 364.3)"/><ellipse cx="154.6" cy="313.8" rx="1.8" ry="1.0" transform="rotate(64 154.6 313.8)"/><ellipse cx="287.3" cy="569.9" rx="6.8" ry="2.1" transform="rotate(7 287.3 569.9)"/><ellipse cx="351.8" cy="289.3" rx="2.3" ry="2.3" transform="rotate(12 351.8 289.3)"/><ellipse cx="381.5" cy="145.5" rx="4.5" ry="1.0" transform="rotate(22 381.5 145.5)"/><ellipse cx="365.7" cy="571.7" rx="4.9" ry="2.4" transform="rotate(9 365.7 571.7)"/><ellipse cx="374.9" cy="327.3" rx="1.7" ry="1.1" transform="rotate(10 374.9 327.3)"/><ellipse cx="351.3" cy="586.1" rx="5.9" ry="1.2" transform="rotate(77 351.3 586.1)"/><ellipse cx="350.4" cy="173.3" rx="5.8" ry="1.6" transform="rotate(24 350.4 173.3)"/><ellipse cx="342.5" cy="588.6" rx="4.9" ry="2.1" transform="rotate(-21 342.5 588.6)"/><ellipse cx="210.1" cy="272.9" rx="2.8" ry="2.1" transform="rotate(-22 210.1 272.9)"/><ellipse cx="273.3" cy="416.6" rx="4.7" ry="2.6" transform="rotate(0 273.3 416.6)"/><ellipse cx="437.8" cy="122.7" rx="1.8" ry="2.2" transform="rotate(17 437.8 122.7)"/><ellipse cx="429.8" cy="191.5" rx="3.0" ry="1.9" transform="rotate(-15 429.8 191.5)"/><ellipse cx="321.5" cy="466.6" rx="3.4" ry="1.4" transform="rotate(-29 321.5 466.6)"/><ellipse cx="338.4" cy="629.7" rx="3.6" ry="1.9" transform="rotate(67 338.4 629.7)"/><ellipse cx="488.3" cy="95.8" rx="1.8" ry="2.2" transform="rotate(26 488.3 95.8)"/><ellipse cx="108.9" cy="244.7" rx="4.8" ry="1.4" transform="rotate(-29 108.9 244.7)"/><ellipse cx="439.5" cy="55.6" rx="5.4" ry="2.7" transform="rotate(10 439.5 55.6)"/><ellipse cx="372.8" cy="231.7" rx="4.0" ry="2.2" transform="rotate(18 372.8 231.7)"/><ellipse cx="177.1" cy="785.3" rx="5.5" ry="1.3" transform="rotate(85 177.1 785.3)"/><ellipse cx="245.9" cy="328.2" rx="1.5" ry="1.7" transform="rotate(-18 245.9 328.2)"/><ellipse cx="417.8" cy="360.8" rx="3.1" ry="2.1" transform="rotate(62 417.8 360.8)"/><ellipse cx="599.0" cy="356.9" rx="3.3" ry="2.8" transform="rotate(64 599.0 356.9)"/><ellipse cx="372.0" cy="391.4" rx="5.4" ry="1.9" transform="rotate(83 372.0 391.4)"/><ellipse cx="218.6" cy="652.5" rx="2.6" ry="2.3" transform="rotate(15 218.6 652.5)"/><ellipse cx="259.7" cy="584.8" rx="5.3" ry="2.1" transform="rotate(-1 259.7 584.8)"/><ellipse cx="115.7" cy="207.4" rx="4.2" ry="2.3" transform="rotate(16 115.7 207.4)"/><ellipse cx="414.5" cy="141.3" rx="4.4" ry="2.7" transform="rotate(63 414.5 141.3)"/><ellipse cx="610.6" cy="440.9" rx="1.6" ry="1.0" transform="rotate(72 610.6 440.9)"/><ellipse cx="312.0" cy="345.2" rx="2.2" ry="1.6" transform="rotate(68 312.0 345.2)"/><ellipse cx="233.7" cy="341.8" rx="3.7" ry="2.8" transform="rotate(12 233.7 341.8)"/><ellipse cx="447.7" cy="147.6" rx="6.8" ry="1.8" transform="rotate(20 447.7 147.6)"/><ellipse cx="508.1" cy="410.2" rx="5.6" ry="2.2" transform="rotate(67 508.1 410.2)"/><ellipse cx="228.7" cy="240.5" rx="5.6" ry="2.2" transform="rotate(-1 228.7 240.5)"/><ellipse cx="615.7" cy="450.5" rx="2.7" ry="2.6" transform="rotate(85 615.7 450.5)"/><ellipse cx="398.6" cy="295.8" rx="3.5" ry="2.5" transform="rotate(5 398.6 295.8)"/><ellipse cx="310.6" cy="474.0" rx="3.6" ry="1.6" transform="rotate(62 310.6 474.0)"/><ellipse cx="292.4" cy="579.8" rx="3.9" ry="1.6" transform="rotate(24 292.4 579.8)"/><ellipse cx="347.4" cy="528.8" rx="1.5" ry="1.7" transform="rotate(22 347.4 528.8)"/><ellipse cx="528.2" cy="415.9" rx="4.5" ry="1.1" transform="rotate(25 528.2 415.9)"/><ellipse cx="325.2" cy="682.5" rx="2.0" ry="1.5" transform="rotate(-14 325.2 682.5)"/><ellipse cx="250.1" cy="748.3" rx="2.8" ry="1.9" transform="rotate(-5 250.1 748.3)"/><ellipse cx="363.0" cy="604.8" rx="3.8" ry="1.5" transform="rotate(77 363.0 604.8)"/><ellipse cx="361.3" cy="192.4" rx="5.7" ry="1.3" transform="rotate(72 361.3 192.4)"/><ellipse cx="312.6" cy="596.8" rx="6.7" ry="1.3" transform="rotate(70 312.6 596.8)"/><ellipse cx="311.5" cy="635.6" rx="2.5" ry="1.8" transform="rotate(78 311.5 635.6)"/><ellipse cx="169.0" cy="832.2" rx="5.6" ry="1.1" transform="rotate(13 169.0 832.2)"/><ellipse cx="314.5" cy="788.1" rx="4.6" ry="2.4" transform="rotate(20 314.5 788.1)"/><ellipse cx="330.7" cy="299.3" rx="5.6" ry="1.9" transform="rotate(10 330.7 299.3)"/><ellipse cx="213.3" cy="668.1" rx="6.4" ry="1.6" transform="rotate(24 213.3 668.1)"/><ellipse cx="483.1" cy="149.6" rx="2.8" ry="2.6" transform="rotate(6 483.1 149.6)"/><ellipse cx="494.1" cy="406.9" rx="2.8" ry="1.8" transform="rotate(15 494.1 406.9)"/><ellipse cx="236.2" cy="261.1" rx="3.0" ry="1.5" transform="rotate(67 236.2 261.1)"/><ellipse cx="412.5" cy="301.9" rx="3.7" ry="2.8" transform="rotate(19 412.5 301.9)"/><ellipse cx="285.8" cy="780.9" rx="2.8" ry="1.1" transform="rotate(75 285.8 780.9)"/><ellipse cx="284.8" cy="771.5" rx="4.0" ry="1.5" transform="rotate(-24 284.8 771.5)"/><ellipse cx="494.0" cy="322.2" rx="1.7" ry="1.6" transform="rotate(-28 494.0 322.2)"/><ellipse cx="458.0" cy="195.0" rx="1.6" ry="1.6" transform="rotate(77 458.0 195.0)"/><ellipse cx="353.8" cy="373.1" rx="5.9" ry="2.2" transform="rotate(16 353.8 373.1)"/><ellipse cx="485.2" cy="374.5" rx="3.1" ry="1.6" transform="rotate(11 485.2 374.5)"/><ellipse cx="453.6" cy="357.9" rx="3.7" ry="2.7" transform="rotate(71 453.6 357.9)"/><ellipse cx="305.9" cy="786.1" rx="4.0" ry="1.3" transform="rotate(16 305.9 786.1)"/><ellipse cx="283.9" cy="456.9" rx="2.3" ry="1.5" transform="rotate(24 283.9 456.9)"/><ellipse cx="404.6" cy="54.3" rx="6.7" ry="1.3" transform="rotate(69 404.6 54.3)"/><ellipse cx="442.8" cy="284.4" rx="3.8" ry="2.0" transform="rotate(18 442.8 284.4)"/><ellipse cx="331.0" cy="556.2" rx="6.0" ry="2.5" transform="rotate(13 331.0 556.2)"/><ellipse cx="328.0" cy="461.8" rx="1.7" ry="2.1" transform="rotate(17 328.0 461.8)"/><ellipse cx="483.4" cy="113.3" rx="2.2" ry="2.6" transform="rotate(18 483.4 113.3)"/><ellipse cx="183.2" cy="246.7" rx="4.3" ry="1.6" transform="rotate(9 183.2 246.7)"/><ellipse cx="448.5" cy="331.0" rx="6.3" ry="2.0" transform="rotate(-24 448.5 331.0)"/><ellipse cx="444.5" cy="361.0" rx="5.9" ry="1.5" transform="rotate(85 444.5 361.0)"/><ellipse cx="436.0" cy="394.0" rx="4.3" ry="2.6" transform="rotate(63 436.0 394.0)"/><ellipse cx="385.2" cy="377.5" rx="3.2" ry="1.2" transform="rotate(69 385.2 377.5)"/><ellipse cx="538.9" cy="367.7" rx="3.0" ry="1.0" transform="rotate(-9 538.9 367.7)"/><ellipse cx="374.9" cy="446.8" rx="2.4" ry="1.0" transform="rotate(62 374.9 446.8)"/><ellipse cx="368.3" cy="576.2" rx="6.0" ry="1.3" transform="rotate(-27 368.3 576.2)"/><ellipse cx="516.0" cy="422.8" rx="5.6" ry="1.8" transform="rotate(66 516.0 422.8)"/><ellipse cx="426.8" cy="348.1" rx="6.2" ry="2.7" transform="rotate(22 426.8 348.1)"/><ellipse cx="585.7" cy="398.4" rx="5.5" ry="2.0" transform="rotate(68 585.7 398.4)"/><ellipse cx="404.4" cy="167.2" rx="1.7" ry="1.2" transform="rotate(29 404.4 167.2)"/><ellipse cx="279.3" cy="729.3" rx="6.0" ry="2.6" transform="rotate(22 279.3 729.3)"/><ellipse cx="445.6" cy="268.0" rx="2.0" ry="1.2" transform="rotate(9 445.6 268.0)"/><ellipse cx="215.9" cy="323.3" rx="6.6" ry="1.1" transform="rotate(16 215.9 323.3)"/><ellipse cx="310.0" cy="397.7" rx="5.8" ry="1.6" transform="rotate(78 310.0 397.7)"/><ellipse cx="410.2" cy="267.8" rx="3.9" ry="1.9" transform="rotate(20 410.2 267.8)"/><ellipse cx="358.3" cy="445.6" rx="5.9" ry="1.3" transform="rotate(12 358.3 445.6)"/><ellipse cx="412.4" cy="156.2" rx="6.0" ry="2.7" transform="rotate(66 412.4 156.2)"/><ellipse cx="402.0" cy="109.0" rx="3.3" ry="1.2" transform="rotate(23 402.0 109.0)"/><ellipse cx="181.8" cy="247.0" rx="6.5" ry="1.9" transform="rotate(23 181.8 247.0)"/><ellipse cx="333.2" cy="499.8" rx="3.3" ry="1.8" transform="rotate(10 333.2 499.8)"/><ellipse cx="240.9" cy="629.8" rx="6.1" ry="1.3" transform="rotate(-10 240.9 629.8)"/><ellipse cx="146.0" cy="280.8" rx="3.1" ry="1.5" transform="rotate(23 146.0 280.8)"/><ellipse cx="583.7" cy="397.8" rx="2.7" ry="2.8" transform="rotate(-15 583.7 397.8)"/><ellipse cx="304.9" cy="662.6" rx="6.5" ry="1.8" transform="rotate(74 304.9 662.6)"/><ellipse cx="415.9" cy="216.9" rx="2.5" ry="1.2" transform="rotate(10 415.9 216.9)"/><ellipse cx="580.7" cy="438.0" rx="1.6" ry="2.5" transform="rotate(22 580.7 438.0)"/><ellipse cx="120.0" cy="236.6" rx="2.7" ry="2.3" transform="rotate(-9 120.0 236.6)"/><ellipse cx="337.2" cy="196.3" rx="4.1" ry="1.0" transform="rotate(-9 337.2 196.3)"/><ellipse cx="478.3" cy="359.5" rx="5.7" ry="1.2" transform="rotate(12 478.3 359.5)"/><ellipse cx="413.7" cy="113.1" rx="3.2" ry="1.7" transform="rotate(24 413.7 113.1)"/><ellipse cx="547.1" cy="377.6" rx="7.0" ry="2.4" transform="rotate(76 547.1 377.6)"/><ellipse cx="205.9" cy="280.6" rx="4.1" ry="1.8" transform="rotate(18 205.9 280.6)"/><ellipse cx="142.5" cy="221.3" rx="5.8" ry="1.6" transform="rotate(64 142.5 221.3)"/><ellipse cx="448.7" cy="276.4" rx="4.2" ry="1.4" transform="rotate(62 448.7 276.4)"/><ellipse cx="398.1" cy="248.1" rx="2.8" ry="1.3" transform="rotate(72 398.1 248.1)"/><ellipse cx="252.8" cy="623.4" rx="4.2" ry="1.5" transform="rotate(30 252.8 623.4)"/><ellipse cx="441.7" cy="312.6" rx="6.2" ry="1.7" transform="rotate(72 441.7 312.6)"/><ellipse cx="230.2" cy="315.5" rx="2.9" ry="1.1" transform="rotate(12 230.2 315.5)"/><ellipse cx="366.3" cy="254.4" rx="4.3" ry="2.8" transform="rotate(21 366.3 254.4)"/><ellipse cx="496.2" cy="129.0" rx="6.9" ry="1.2" transform="rotate(13 496.2 129.0)"/><ellipse cx="392.1" cy="61.2" rx="3.2" ry="1.0" transform="rotate(7 392.1 61.2)"/><ellipse cx="391.1" cy="345.2" rx="2.3" ry="2.2" transform="rotate(77 391.1 345.2)"/><ellipse cx="460.5" cy="338.9" rx="6.0" ry="2.4" transform="rotate(10 460.5 338.9)"/><ellipse cx="620.6" cy="451.1" rx="4.4" ry="2.5" transform="rotate(13 620.6 451.1)"/><ellipse cx="294.0" cy="533.0" rx="6.7" ry="2.8" transform="rotate(-24 294.0 533.0)"/><ellipse cx="442.7" cy="389.5" rx="1.6" ry="2.2" transform="rotate(85 442.7 389.5)"/><ellipse cx="506.4" cy="91.3" rx="5.0" ry="2.3" transform="rotate(72 506.4 91.3)"/><ellipse cx="246.9" cy="652.6" rx="2.4" ry="2.5" transform="rotate(-8 246.9 652.6)"/><ellipse cx="334.7" cy="254.6" rx="5.7" ry="1.6" transform="rotate(9 334.7 254.6)"/><ellipse cx="259.9" cy="545.1" rx="6.9" ry="2.5" transform="rotate(75 259.9 545.1)"/><ellipse cx="287.5" cy="613.8" rx="4.8" ry="2.6" transform="rotate(11 287.5 613.8)"/><ellipse cx="364.0" cy="483.1" rx="4.5" ry="1.9" transform="rotate(70 364.0 483.1)"/><ellipse cx="299.2" cy="634.3" rx="6.6" ry="2.1" transform="rotate(2 299.2 634.3)"/><ellipse cx="377.6" cy="432.6" rx="4.7" ry="1.3" transform="rotate(9 377.6 432.6)"/><ellipse cx="412.3" cy="330.2" rx="5.8" ry="2.5" transform="rotate(66 412.3 330.2)"/><ellipse cx="284.4" cy="421.2" rx="1.9" ry="1.6" transform="rotate(61 284.4 421.2)"/><ellipse cx="591.0" cy="441.1" rx="4.6" ry="1.5" transform="rotate(27 591.0 441.1)"/><ellipse cx="424.8" cy="363.7" rx="2.2" ry="2.7" transform="rotate(8 424.8 363.7)"/><ellipse cx="368.0" cy="176.9" rx="6.2" ry="1.7" transform="rotate(19 368.0 176.9)"/><ellipse cx="396.8" cy="42.2" rx="6.6" ry="1.5" transform="rotate(20 396.8 42.2)"/></g>
<g fill="#ffffff"><path d="M136.5 361.0 H156.5 A5.0 5.0 0 0 1 161.5 366.0 V480.0 A14.0 14.0 0 0 1 147.5 494.0 H131.5 A0.0 0.0 0 0 1 131.5 494.0 V366.0 A5.0 5.0 0 0 1 136.5 361.0 Z"/><path d="M124.6 462.1 H161.5 A0.0 0.0 0 0 1 161.5 462.1 V478.0 A18.0 16.0 0 0 1 143.5 494.0 H135.6 A16.0 16.0 0 0 1 119.6 478.0 V467.1 A5.0 5.0 0 0 1 124.6 462.1 Z"/><path fill-rule="evenodd" d="M213.0 361.0 H213.0 A39.5 33.6 0 0 1 252.5 394.6 V460.4 A39.5 33.6 0 0 1 213.0 494.0 H213.0 A39.5 33.6 0 0 1 173.5 460.4 V394.6 A39.5 33.6 0 0 1 213.0 361.0 Z M213.0 391.0 H213.0 A8.5 10.8 0 0 1 221.5 401.8 V453.2 A8.5 10.8 0 0 1 213.0 464.0 H213.0 A8.5 10.8 0 0 1 204.5 453.2 V401.8 A8.5 10.8 0 0 1 213.0 391.0 Z"/><path d="M261.0 365.0 L292.0 365.0 L308.6 430.2 L281.1 434.2Z" stroke="#fff" stroke-width="8" stroke-linejoin="round"/><path d="M336.0 365.0 L305.0 365.0 L288.4 430.2 L315.9 434.2Z" stroke="#fff" stroke-width="8" stroke-linejoin="round"/><rect x="283.0" y="420.2" width="31.0" height="73.8" rx="5.0"/><rect x="341.0" y="361.0" width="31.0" height="133.0" rx="5.0"/><rect x="341.0" y="361.0" width="56.5" height="29.0" rx="5.0"/><rect x="341.0" y="415.5" width="50.9" height="28.0" rx="5.0"/><path fill-rule="evenodd" d="M409.7 361.0 H480.0 A5.0 4.0 0 0 1 485.0 365.0 V461.9 A40.1 32.1 0 0 1 444.9 494.0 H444.9 A40.1 32.1 0 0 1 404.7 461.9 V365.0 A5.0 4.0 0 0 1 409.7 361.0 Z M433.7 359.0 H456.0 A0.0 0.0 0 0 1 456.0 359.0 V453.3 A9.0 11.7 0 0 1 447.0 465.0 H442.7 A9.0 11.7 0 0 1 433.7 453.3 V359.0 A0.0 0.0 0 0 1 433.7 359.0 Z"/><rect x="494.5" y="361.0" width="30.0" height="133.0" rx="5.0"/><rect x="494.5" y="465.0" width="55.1" height="29.0" rx="5.0"/><path fill-rule="evenodd" d="M98.3 520.0 H132.3 A34.0 34.0 0 0 1 166.3 554.0 V573.2 A36.5 44.0 0 0 1 129.8 617.2 H98.3 A5.0 5.0 0 0 1 93.3 612.2 V525.0 A5.0 5.0 0 0 1 98.3 520.0 Z M130.3 545.0 H130.5 A9.0 9.0 0 0 1 139.5 554.0 V579.3 A9.0 9.0 0 0 1 130.5 588.3 H130.3 A9.0 9.0 0 0 1 121.3 579.3 V554.0 A9.0 9.0 0 0 1 130.3 545.0 Z"/><rect x="93.3" y="585.7" width="31.0" height="65.7" rx="5.0"/><path fill-rule="evenodd" d="M167.7 649.4 L190.3 522.0 L228.7 522.0 L251.3 649.4Z M209.0 551.5 L210.0 551.5 L214.5 576.5 L204.5 576.5Z M199.5 649.4 L199.5 635.6 Q199.5 627.7 209.5 627.7 Q219.5 627.7 219.5 635.6 L219.5 649.4 Z"/><rect x="246.0" y="520.0" width="59.8" height="29.0" rx="5.0"/><rect x="261.4" y="520.0" width="29.0" height="131.4" rx="5.0"/><rect x="316.0" y="520.0" width="29.6" height="131.4" rx="5.0"/><rect x="357.6" y="520.0" width="31.0" height="131.4" rx="5.0"/><rect x="357.6" y="520.0" width="58.4" height="29.0" rx="5.0"/><rect x="357.6" y="568.6" width="56.6" height="29.0" rx="5.0"/><rect x="357.6" y="622.4" width="58.4" height="29.0" rx="5.0"/><rect x="425.3" y="520.0" width="28.0" height="131.4" rx="5.0"/><rect x="478.3" y="520.0" width="28.0" height="131.4" rx="5.0"/><path d="M429.3 524.0 L460.3 524.0 L502.3 647.4 L471.3 647.4Z" stroke="#fff" stroke-width="8" stroke-linejoin="round"/><rect x="511.6" y="520.0" width="67.7" height="29.0" rx="5.0"/><rect x="531.0" y="520.0" width="29.0" height="131.4" rx="5.0"/><rect x="61.3" y="676.7" width="31.0" height="131.3" rx="5.0"/><rect x="61.3" y="676.7" width="64.2" height="29.0" rx="5.0"/><rect x="61.3" y="730.5" width="57.8" height="28.0" rx="5.0"/><path fill-rule="evenodd" d="M116.7 806.0 L139.1 678.7 L177.4 678.7 L199.8 806.0Z M157.8 708.2 L158.8 708.2 L163.2 733.2 L153.2 733.2Z M148.2 806.0 L148.2 792.2 Q148.2 784.4 158.2 784.4 Q168.2 784.4 168.2 792.2 L168.2 806.0 Z"/><rect x="200.0" y="676.7" width="34.8" height="131.3" rx="5.0"/><rect x="240.7" y="676.7" width="75.8" height="29.0" rx="5.0"/><rect x="264.1" y="676.7" width="29.0" height="131.3" rx="5.0"/><rect x="316.5" y="676.7" width="29.0" height="131.3" rx="5.0"/><rect x="360.4" y="676.7" width="29.0" height="131.3" rx="5.0"/><rect x="316.5" y="729.2" width="72.9" height="29.0" rx="5.0"/><rect x="399.6" y="676.7" width="31.0" height="131.3" rx="5.0"/><rect x="399.6" y="676.7" width="62.7" height="29.0" rx="5.0"/><rect x="399.6" y="730.5" width="56.4" height="28.0" rx="5.0"/><path fill-rule="evenodd" d="M471.7 676.7 H544.8 A5.0 4.0 0 0 1 549.8 680.7 V774.8 A41.5 33.2 0 0 1 508.2 808.0 H508.2 A41.5 33.2 0 0 1 466.7 774.8 V680.7 A5.0 4.0 0 0 1 471.7 676.7 Z M495.7 674.7 H520.8 A0.0 0.0 0 0 1 520.8 674.7 V767.3 A9.0 11.7 0 0 1 511.8 779.0 H504.7 A9.0 11.7 0 0 1 495.7 767.3 V674.7 A0.0 0.0 0 0 1 495.7 674.7 Z"/><rect x="557.0" y="676.7" width="30.0" height="131.3" rx="5.0"/><rect x="557.0" y="779.0" width="52.6" height="29.0" rx="5.0"/></g>
<text x="325" y="869.5" font-size="51" font-family="Liberation Serif" font-weight="bold" font-style="italic" fill="#fff" stroke="#fff" stroke-width="3" stroke-linejoin="round" textLength="279" lengthAdjust="spacingAndGlyphs">Romans 12:12</text>
</svg>
<div class="a" style="left:0px;top:1102px;width:1920px;height:44px;background:#474747;"></div>
<svg style="left:10px;top:1112px;" width="24" height="24" viewBox="0 0 24 24"><rect x="0.5" y="0.5" width="22" height="22" fill="none" stroke="#dcdcdc" stroke-width="1.2"/><circle cx="11.5" cy="11.5" r="6" fill="none" stroke="#dcdcdc" stroke-width="1.2" stroke-dasharray="1.6 2"/></svg>
<div class="t" style="left:364.16px;top:1117.21px;font-size:17px;color:#d6d6d6;font-weight:400;font-family:'Liberation Sans',sans-serif;transform:scaleX(1.0383);">RGB/Alpha (8-bit integer/c...  sRGB-elle-V2-srgbtrc.icc</div>
<div class="a" style="left:1248px;top:1108px;width:178px;height:34px;background:#454545;border:1px solid #3a3a3a;box-shadow:inset 1px 1px 0 #3d3d3d"></div>
<div class="t" style="left:1258.60px;top:1116.54px;font-size:18.5px;color:#d6d6d6;font-weight:400;font-family:'Liberation Sans',sans-serif;transform:scaleX(0.8964);">750 x 1,006 (4.5 MiB)</div>
<div class="a" style="left:1293px;top:1135px;width:9px;height:1px;background:#d6d6d6;"></div>
<svg style="left:1439px;top:1110px;" width="30" height="30" viewBox="0 0 30 30"><circle cx="15" cy="15" r="14.5" fill="#303030" stroke="#444" stroke-width="1"/><path d="M15 3V27M3 15H27" stroke="#555" stroke-width="0.8" stroke-dasharray="2 2"/><path d="M15 15H27" stroke="#f0f0f0" stroke-width="1.6"/><circle cx="15" cy="15" r="2" fill="#f0f0f0"/><circle cx="27" cy="15" r="2" fill="#f0f0f0"/></svg>
<div class="t" style="left:1517.10px;top:1116.34px;font-size:18.5px;color:#d6d6d6;font-weight:400;font-family:'Liberation Sans',sans-serif;transform:scaleX(0.8651);">0.00</div>
<svg style="left:1548px;top:1115px;" width="6" height="6" viewBox="0 0 6 6"><circle cx="3" cy="3" r="1.8" fill="none" stroke="#d6d6d6" stroke-width="0.9"/></svg>
<div class="t" style="left:1677.42px;top:1116.54px;font-size:18.5px;color:#d6d6d6;font-weight:400;font-family:'Liberation Sans',sans-serif;transform:scaleX(0.8810);">121.9%</div>
<div class="a" style="left:1759px;top:1122px;width:122px;height:7px;background:#3a3a3a;border-radius:3px"></div>
<div class="a" style="left:1759px;top:1122px;width:36px;height:7px;background:#6f8fae;border-radius:3px"></div>
<div class="a" style="left:1792px;top:1117px;width:19px;height:18px;background:#444;border:1px solid #2e2e2e;border-radius:4px;box-shadow:inset 0 0 0 1px #555"></div>
<div class="a" style="left:1883px;top:1109px;width:34px;height:33px;background:#3c3c3c;border:1px solid #333;border-radius:4px"></div>
<svg style="left:1891px;top:1113px;" width="20" height="26" viewBox="0 0 20 26"><rect x="0.75" y="0.75" width="17.5" height="23.5" fill="none" stroke="#eee" stroke-width="1.5"/><rect x="4" y="8" width="11" height="10" fill="#eee"/><rect x="8" y="11.5" width="3.5" height="3.5" fill="#222"/></svg>
<div class="a" style="left:0px;top:1145px;width:1920px;height:2px;background:#3b3938;"></div>
<div class="a" style="left:0px;top:1147px;width:1920px;height:52px;background:#f0e6dc;"></div>
<svg style="left:21px;top:1164px;" width="20" height="19" viewBox="0 0 20 19"><path d="M0 2.6L8 1.5V8.8H0Z M9.2 1.3L19.5 0V8.8H9.2Z M0 10H8V17.5L0 16.4Z M9.2 10H19.5V19L9.2 17.7Z" fill="#111"/></svg>
<div class="a" style="left:63px;top:1147px;width:451px;height:52px;background:#ffffff;"></div>
<svg style="left:78px;top:1160px;" width="28" height="28" viewBox="0 0 28 28"><circle cx="16.5" cy="10.5" r="7.5" fill="none" stroke="#1b1b1b" stroke-width="1.6"/><path d="M11 16 L2 25" stroke="#1b1b1b" stroke-width="1.8"/></svg>
<div class="t" style="left:121.90px;top:1165.36px;font-size:19.3px;color:#2a2a2a;font-weight:400;font-family:'Liberation Sans',sans-serif;transform:scaleX(0.9806);">Type here to search</div>
<svg style="left:414px;top:1148px;" width="100" height="51" viewBox="0 0 100 51"><defs><linearGradient id="moon" x1="0" y1="0" x2="1" y2="1"><stop offset="0" stop-color="#e8c070"/><stop offset="1" stop-color="#f0a040"/></linearGradient><linearGradient id="hill" x1="0" y1="0" x2="1" y2="0"><stop offset="0" stop-color="#3a2a8a"/><stop offset="1" stop-color="#5a3aa8"/></linearGradient></defs>
<path d="M60 0 Q75 18 100 22 M66 0 Q78 12 100 12 M80 0 Q86 8 100 6 M100 0 Q70 10 78 36 M100 30 V0" fill="none" stroke="#c8b8f0" stroke-width="1.4"/>
<circle cx="25" cy="24" r="21" fill="url(#moon)"/>
<path d="M26 45 L28 28 L20 18 M28 28 L36 16 M24 22 L18 20 M33 20 L40 21 M28 28 L29 14" fill="none" stroke="#2a2050" stroke-width="2.2"/>
<circle cx="51" cy="9" r="3" fill="#c070f0"/>
<circle cx="73" cy="31" r="2" fill="#60c8e0"/>
<path d="M0 51 Q20 36 50 40 Q75 30 100 33 V51Z" fill="url(#hill)"/>
<ellipse cx="52" cy="38" rx="12" ry="11" fill="#f06a30"/>
<path d="M46 39 Q52 46 58 39" fill="#7a2a20"/></svg>
<svg style="left:535px;top:1162px;" width="22" height="22" viewBox="0 0 22 22"><circle cx="11" cy="11" r="8.6" fill="none" stroke="#111" stroke-width="2.6"/></svg>
<svg style="left:597px;top:1161px;" width="25" height="24" viewBox="0 0 25 24"><path d="M2 2.5H17 M2 21.5H17 M4 5.5V18.5H15V5.5Z" fill="none" stroke="#222" stroke-width="1.5"/><path d="M22 1V23" stroke="#222" stroke-width="1.4"/><circle cx="22" cy="9" r="1.5" fill="#222"/></svg>
<svg style="left:660px;top:1160px;" width="30" height="26" viewBox="0 0 30 26"><path d="M1 3H12L14 6H29V25H1Z" fill="#f7c84a"/><path d="M1 3H12L14 6H1Z" fill="#e0a820"/><path d="M9 25V14H21V25H17V18H13V25Z" fill="#3b8fe0"/></svg>
<svg style="left:726px;top:1157px;" width="30" height="34" viewBox="0 0 30 34"><path d="M6 22 Q2 6 12 3 Q26 1 28 14 Q28 22 20 24" fill="none" stroke="#d64020" stroke-width="3.5"/><path d="M13 6 L18 22 M22 8 L15 22" stroke="#9a9a9a" stroke-width="3"/><circle cx="11" cy="28" r="3.5" fill="none" stroke="#2a78d0" stroke-width="2.5"/><circle cx="21" cy="29" r="3.5" fill="none" stroke="#2a78d0" stroke-width="2.5"/></svg>
<div class="a" style="left:775px;top:1148px;width:63px;height:51px;background:#f8f2ec;"></div>
<div class="a" style="left:793px;top:1160px;width:26px;height:26px;border-radius:50%;background:conic-gradient(from 0deg,#ff38f0 0deg,#ff7a90 60deg,#ffc000 110deg,#f0ff60 140deg,#30f0e0 200deg,#40d0ff 240deg,#9a80ff 290deg,#ff38f0 360deg)"></div>
<div class="a" style="left:793px;top:1160px;width:26px;height:26px;border-radius:50%;background:radial-gradient(circle at 50% 50%,rgba(255,255,255,.35),rgba(255,255,255,0) 60%)"></div>
<svg style="left:789px;top:1156px;" width="34" height="34" viewBox="0 0 34 34"><path d="M8.9 8.9 L22.9 22.2" stroke="#2a1a3a" stroke-width="5.46" stroke-linecap="round"/><circle cx="22.9" cy="22.9" r="3.12" fill="#000"/></svg>
<div class="a" style="left:775px;top:1196px;width:63px;height:3px;background:#00b1bf;"></div>
<svg style="left:856px;top:1156px;" width="34" height="34" viewBox="0 0 34 34"><circle cx="16" cy="16" r="14.5" fill="#2aa052"/><path d="M16 16 L3.44 8.75 A14.5 14.5 0 0 1 28.56 8.75Z" fill="#e0382e"/><path d="M16 16 L28.56 8.75 A14.5 14.5 0 0 1 16 30.5Z" fill="#f8c21a"/><circle cx="16" cy="16" r="6.67" fill="#fff"/><circle cx="16" cy="16" r="5.22" fill="#3a7ce8"/><circle cx="24" cy="24" r="9" fill="#e4dcd8"/><circle cx="24" cy="24" r="8" fill="#f0ebe8" stroke="#cfc8c4" stroke-width="1"/></svg>
<div class="a" style="left:845px;top:1196px;width:54px;height:3px;background:#00b1bf;"></div>
<svg style="left:920px;top:1157px;" width="34" height="34" viewBox="0 0 34 34"><defs><linearGradient id="cv" x1="0" y1="0" x2="0" y2="1"><stop offset="0" stop-color="#10b8d0"/><stop offset=".5" stop-color="#3a60e0"/><stop offset="1" stop-color="#7a30f0"/></linearGradient></defs><circle cx="17" cy="16" r="16" fill="url(#cv)"/><text x="17" y="20" font-family="Liberation Serif" font-style="italic" font-weight="bold" font-size="11" fill="#fff" text-anchor="middle">Canva</text></svg>
<div class="a" style="left:910px;top:1196px;width:54px;height:3px;background:#00b1bf;"></div>
<svg style="left:986px;top:1156px;" width="34" height="34" viewBox="0 0 34 34"><circle cx="16" cy="16" r="14.5" fill="#2aa052"/><path d="M16 16 L3.44 8.75 A14.5 14.5 0 0 1 28.56 8.75Z" fill="#e0382e"/><path d="M16 16 L28.56 8.75 A14.5 14.5 0 0 1 16 30.5Z" fill="#f8c21a"/><circle cx="16" cy="16" r="6.67" fill="#fff"/><circle cx="16" cy="16" r="5.22" fill="#3a7ce8"/><circle cx="23" cy="23" r="9.5" fill="#3a3028"/><circle cx="23" cy="22" r="6" fill="#7a6050"/></svg>
<div class="a" style="left:976px;top:1196px;width:53px;height:3px;background:#00b1bf;"></div>
<svg style="left:1056px;top:1159px;" width="24" height="28" viewBox="0 0 24 28"><path d="M1 1H15L22 8V27H1Z" fill="#fbfbfb" stroke="#e8e8e8" stroke-width="1"/></svg>
<div class="a" style="left:1041px;top:1196px;width:53px;height:3px;background:#00b1bf;"></div>
<div class="a" style="left:1221px;top:1161px;width:62px;height:24px;background:#ffffff;"></div>
<div class="a" style="left:1223px;top:1163px;width:58px;height:20px;background:#13a24c;"></div>
<div class="t" style="left:1229.82px;top:1163.99px;font-size:18.2px;color:#ffffff;font-weight:400;font-family:'Liberation Sans',sans-serif;transform:scaleX(0.9836);">100%</div>
<svg style="left:1290px;top:1161px;" width="18" height="24" viewBox="0 0 18 24"><path d="M5 2V8M10 2V8M3 8H12V13Q12 18 7.5 18Q3 18 3 13Z M7.5 18V23" fill="none" stroke="#666" stroke-width="1.3" stroke-dasharray="2 1.2"/></svg>
<svg style="left:1428px;top:1157px;" width="34" height="34" viewBox="0 0 34 34"><defs><linearGradient id="mn" x1="0" y1="0" x2="0" y2="1"><stop offset="0" stop-color="#f8c040"/><stop offset="1" stop-color="#f07a20"/></linearGradient></defs><path d="M20 1 A15 15 0 1 1 1 22 A13 13 0 0 0 20 1Z" fill="url(#mn)"/></svg>
<div class="t" style="left:1470.80px;top:1164.66px;font-size:20.6px;color:#1b1b1b;font-weight:400;font-family:'Liberation Sans',sans-serif;transform:scaleX(0.8477);">55°F  Clear</div>
<svg style="left:1583px;top:1168px;" width="16" height="11" viewBox="0 0 16 11"><path d="M1 9L7.5 2L14 9" fill="none" stroke="#222" stroke-width="1.4"/></svg>
<svg style="left:1610px;top:1165px;" width="25" height="17" viewBox="0 0 25 17"><path d="M5 15 Q0 15 1 10 Q2 6 7 7 Q9 1 15 2 Q20 3 20 8 Q24 9 23 13 Q22 15 19 15Z" fill="#a8a8a8" stroke="#333" stroke-width="1.4"/></svg>
<svg style="left:1641px;top:1161px;" width="25" height="24" viewBox="0 0 25 24"><path d="M1.5 5L22.5 1.5V21L1.5 21.5Z" fill="none" stroke="#333" stroke-width="1.3"/><path d="M8 11Q11 7 15 9 M15 14Q12 17 8 15" fill="none" stroke="#333" stroke-width="1.2"/><circle cx="19" cy="19" r="4.3" fill="#f59a1a"/></svg>
<svg style="left:1673px;top:1163px;" width="25" height="20" viewBox="0 0 25 20"><path d="M3 1V5M8 1V5M1 5H10V9Q10 12 5.5 12Q1 12 1 9Z M5.5 12V18" fill="none" stroke="#111" stroke-width="1.5"/><rect x="9" y="6" width="13" height="9" fill="#111"/><rect x="22" y="8.5" width="2" height="4" fill="#111"/></svg>
<svg style="left:1709px;top:1165px;" width="19" height="19" viewBox="0 0 19 19"><path d="M1.5 17 Q2 3 17 1.5 M5 17 Q5.5 7 17 5 M8.5 17 Q9 10.5 17 9 M12 17 Q12 14 17 12.5" fill="none" stroke="#333" stroke-width="1.2"/><circle cx="15.5" cy="16.5" r="1.6" fill="#111"/></svg>
<svg style="left:1736px;top:1165px;" width="24" height="18" viewBox="0 0 24 18"><path d="M1 6H5L11 1V17L5 12H1Z" fill="none" stroke="#333" stroke-width="1.3"/><path d="M14 6Q16 9 14 12 M17 3.5Q20 9 17 14.5 M20 1.5Q24.5 9 20 16.5" fill="none" stroke="#555" stroke-width="1.1"/></svg>
<div class="t" style="left:1774.67px;top:1153.83px;font-size:16.5px;color:#111;font-weight:400;font-family:'Liberation Sans',sans-serif;transform:scaleX(0.9297);">11:12 PM</div>
<div class="t" style="left:1768.07px;top:1178.03px;font-size:16.5px;color:#111;font-weight:400;font-family:'Liberation Sans',sans-serif;transform:scaleX(0.9336);">10/22/2022</div>
<svg style="left:1864px;top:1161px;" width="25" height="25" viewBox="0 0 25 25"><path d="M1.5 1.5H23V17.5H14.5L11 21.5L7.5 17.5H1.5Z" fill="none" stroke="#111" stroke-width="1.3"/></svg>
<div class="a" style="left:1914px;top:1148px;width:1px;height:51px;background:#b0a8a0;"></div>
<svg style="left:1535px;top:113px;" width="26" height="26" viewBox="0 0 26 26"><circle cx="13" cy="13" r="11.5" fill="none" stroke="#dcdcdc" stroke-width="1.6"/><path d="M9 11.5V9Q9 5.5 12.5 5.5Q16 5.5 16 9" fill="none" stroke="#dcdcdc" stroke-width="1.8"/><rect x="6.5" y="11.5" width="12.5" height="7" rx="1" fill="#dcdcdc"/></svg>
<svg style="left:1860px;top:115px;" width="24" height="22" viewBox="0 0 24 22"><rect x="8.5" y="1" width="13" height="11" fill="none" stroke="#e6e6e6" stroke-width="1.6"/><rect x="1" y="9.5" width="12" height="11" fill="#474747" stroke="#e6e6e6" stroke-width="1.6"/></svg>
<svg style="left:1896px;top:118px;" width="18" height="17" viewBox="0 0 18 17"><path d="M1 1L16 16M16 1L1 16" stroke="#e6e6e6" stroke-width="1.7"/></svg>
<div class="t" style="left:1569.90px;top:117.66px;font-size:16.7px;color:#d9d9d9;font-weight:400;font-family:'Liberation Sans',sans-serif;transform:scaleX(1.0713);">Tool Options</div>
<div class="t" style="left:1539.70px;top:145.76px;font-size:17.3px;color:#d9d9d9;font-weight:400;font-family:'Liberation Sans',sans-serif;transform:scaleX(0.9965);">Contiguous Area Selection</div>
<div class="t" style="left:1552.90px;top:189.20px;font-size:17.6px;color:#d9d9d9;font-weight:400;font-family:'Liberation Sans',sans-serif;">Action:</div>
<div class="a" style="left:1608px;top:181px;width:177px;height:33px;background:#3e3e3e;border:1px solid #333;border-radius:3px"></div>
<div class="a" style="left:1750px;top:181px;width:35px;height:33px;background:#4e5f70;border-radius:0 3px 3px 0"></div>
<svg style="left:1608px;top:181px;" width="177" height="33" viewBox="0 0 177 33"><rect x="11.5" y="8.5" width="16" height="15.5" fill="#777" stroke="#eee" stroke-width="1.8"/>
<rect x="43" y="7" width="14" height="13" fill="none" stroke="#999" stroke-width="1.2"/><rect x="49" y="13" width="14" height="13" fill="none" stroke="#999" stroke-width="1.2"/><rect x="49" y="13" width="8" height="7" fill="#888" stroke="#eee" stroke-width="1.6"/>
<rect x="78" y="6.5" width="16" height="14" fill="#777" stroke="#eee" stroke-width="1.6"/><rect x="84" y="12.5" width="16" height="15" fill="#777" stroke="#eee" stroke-width="1.8"/><path d="M79 7.5 H93 V13.5 H85 V19.5 H79Z" fill="#777"/>
<rect x="114" y="6.5" width="15" height="14" fill="#777" stroke="#eee" stroke-width="1.6"/><rect x="120" y="13" width="16" height="15" fill="#3e3e3e" stroke="#aaa" stroke-width="1.3"/>
<rect x="149" y="6.5" width="15" height="14" fill="#888" stroke="#eee" stroke-width="1.6"/><rect x="155" y="13" width="16" height="15" fill="#999" stroke="#eee" stroke-width="1.6"/><rect x="156" y="14" width="7" height="6" fill="#4e5f70"/></svg>
<div class="a" style="left:1552px;top:227px;width:22px;height:21px;background:#3a3a3a;border-radius:2px"></div>
<svg style="left:1554px;top:229px;" width="18" height="18" viewBox="0 0 18 18"><path d="M3 9 L7.5 15 L14.5 2" fill="none" stroke="#dcdcdc" stroke-width="2.2"/></svg>
<div class="t" style="left:1581.30px;top:229.72px;font-size:17.7px;color:#d9d9d9;font-weight:400;font-family:'Liberation Sans',sans-serif;transform:scaleX(1.0062);">Anti-aliasing</div>
<div class="a" style="left:1553px;top:262px;width:325px;height:33px;background:#3f3f3f;border:1px solid #333;border-radius:4px;box-shadow:inset 0 1px 0 #4b4b4b"></div>
<div class="t" style="left:1560.30px;top:271.09px;font-size:16.9px;color:#d9d9d9;font-weight:400;font-family:'Liberation Sans',sans-serif;transform:scaleX(0.9803);">Current Layer</div>
<svg style="left:1855px;top:276px;" width="14" height="8" viewBox="0 0 14 8"><path d="M0 0H14 L7.0 7Z" fill="#9a9a9a"/></svg>
<div class="a" style="left:1553px;top:306px;width:325px;height:31px;background:#3f3f3f;border:1px solid #333;border-radius:4px;box-shadow:inset 0 1px 0 #4b4b4b"></div>
<svg style="left:1821px;top:310px;" width="24" height="22" viewBox="0 0 24 22"><path d="M2 2 H11 L21 12 L12 21 L2 11Z" fill="#dcdcdc" stroke="#dcdcdc" stroke-width="1" stroke-linejoin="round"/><circle cx="7" cy="7" r="1.8" fill="#474747"/></svg>
<svg style="left:1853px;top:318px;" width="14" height="8" viewBox="0 0 14 8"><path d="M0 0H14 L7.0 7Z" fill="#6e6e6e"/></svg>
<div class="t" style="left:1538.56px;top:369.27px;font-size:17.4px;color:#d9d9d9;font-weight:400;font-family:'Liberation Sans',sans-serif;transform:scaleX(0.9436);">Fuzziness:</div>
<div class="a" style="left:1759px;top:361px;width:133px;height:32px;background:#353535;border:1px solid #3a3a3a;border-radius:3px"></div>
<div class="a" style="left:1870px;top:362px;width:21px;height:30px;background:#3d3d3d;border-left:1px solid #333"></div>
<svg style="left:1870px;top:362px;" width="20" height="30" viewBox="0 0 20 30"><path d="M4 11.0 L10 5.0 L16 11.0Z M4 19.0 L10 25.0 L16 19.0Z" fill="#9a9a9a"/></svg>
<div class="t" style="left:1810.00px;top:369.77px;font-size:17.4px;color:#e0e0e0;font-weight:400;font-family:'Liberation Sans',sans-serif;">1</div>
<div class="t" style="left:1539.50px;top:412.94px;font-size:17.2px;color:#d9d9d9;font-weight:400;font-family:'Liberation Sans',sans-serif;transform:scaleX(1.0250);">Grow/shrink selection:</div>
<div class="a" style="left:1759px;top:405px;width:133px;height:31px;background:#353535;border:1px solid #3a3a3a;border-radius:3px"></div>
<div class="a" style="left:1760px;top:406px;width:56px;height:29px;background:#53718f;"></div>
<div class="a" style="left:1870px;top:406px;width:21px;height:29px;background:#3d3d3d;border-left:1px solid #333"></div>
<svg style="left:1870px;top:405px;" width="20" height="31" viewBox="0 0 20 31"><path d="M4 11.5 L10 5.5 L16 11.5Z M4 19.5 L10 25.5 L16 19.5Z" fill="#bdbdbd"/></svg>
<div class="t" style="left:1800.50px;top:412.77px;font-size:17.4px;color:#e8e8e8;font-weight:400;font-family:'Liberation Sans',sans-serif;transform:scaleX(0.8333);">0</div>
<div class="t" style="left:1816.21px;top:412.77px;font-size:17.4px;color:#d0d0d0;font-weight:400;font-family:'Liberation Sans',sans-serif;transform:scaleX(0.7922);">px</div>
<div class="a" style="left:1760px;top:447px;width:133px;height:2px;background:#3a3a3a;"></div>
<div class="a" style="left:1900px;top:138px;width:20px;height:311px;background:#3c3c3c;"></div>
<div class="a" style="left:1900px;top:138px;width:20px;height:19px;background:#444;border:1px solid #555"></div>
<svg style="left:1902px;top:142px;" width="16" height="10" viewBox="0 0 16 10"><path d="M2 8 L8 2 L14 8Z" fill="#bdbdbd"/></svg>
<div class="a" style="left:1900px;top:159px;width:20px;height:218px;background:#434343;border:1px solid #555"></div>
<div class="a" style="left:1900px;top:430px;width:20px;height:19px;background:#444;border:1px solid #555"></div>
<svg style="left:1902px;top:435px;" width="16" height="10" viewBox="0 0 16 10"><path d="M2 2 L8 8 L14 2Z" fill="#bdbdbd"/></svg>
<svg style="left:1716px;top:451px;" width="28" height="4" viewBox="0 0 28 4"><rect x="0.0" y="0.5" width="2.4" height="2.4" fill="#8a8a8a"/><rect x="4.4" y="0.5" width="2.4" height="2.4" fill="#8a8a8a"/><rect x="8.8" y="0.5" width="2.4" height="2.4" fill="#8a8a8a"/><rect x="13.2" y="0.5" width="2.4" height="2.4" fill="#8a8a8a"/><rect x="17.6" y="0.5" width="2.4" height="2.4" fill="#8a8a8a"/><rect x="22.0" y="0.5" width="2.4" height="2.4" fill="#8a8a8a"/></svg>
<svg style="left:1535px;top:458px;" width="26" height="26" viewBox="0 0 26 26"><circle cx="13" cy="13" r="11.5" fill="none" stroke="#dcdcdc" stroke-width="1.6"/><path d="M9 11.5V9Q9 5.5 12.5 5.5Q16 5.5 16 9" fill="none" stroke="#dcdcdc" stroke-width="1.8"/><rect x="6.5" y="11.5" width="12.5" height="7" rx="1" fill="#dcdcdc"/></svg>
<svg style="left:1860px;top:460px;" width="24" height="22" viewBox="0 0 24 22"><rect x="8.5" y="1" width="13" height="11" fill="none" stroke="#e6e6e6" stroke-width="1.6"/><rect x="1" y="9.5" width="12" height="11" fill="#474747" stroke="#e6e6e6" stroke-width="1.6"/></svg>
<svg style="left:1896px;top:463px;" width="18" height="17" viewBox="0 0 18 17"><path d="M1 1L16 16M16 1L1 16" stroke="#e6e6e6" stroke-width="1.7"/></svg>
<div class="t" style="left:1568.67px;top:462.42px;font-size:16.4px;color:#d9d9d9;font-weight:400;font-family:'Liberation Sans',sans-serif;transform:scaleX(0.9312);">Layers</div>
<div class="a" style="left:1536px;top:486px;width:331px;height:45px;background:#3f3f3f;border:1px solid #333;border-radius:4px;box-shadow:inset 0 1px 0 #4b4b4b"></div>
<div class="t" style="left:1541.65px;top:499.81px;font-size:18.3px;color:#d9d9d9;font-weight:400;font-family:'Liberation Sans',sans-serif;transform:scaleX(0.9498);">Normal</div>
<svg style="left:1845px;top:505px;" width="14" height="8" viewBox="0 0 14 8"><path d="M0 0H14 L7.0 7Z" fill="#9a9a9a"/></svg>
<svg style="left:1882px;top:494px;" width="24" height="28" viewBox="0 0 24 28"><path d="M1.5 1.5H22.5L14 12V26L10 22V12Z" fill="none" stroke="#e0e0e0" stroke-width="1.8" stroke-linejoin="round"/></svg>
<svg style="left:1906px;top:521px;" width="9" height="8" viewBox="0 0 9 8"><path d="M0 0H9 L4.5 7Z" fill="#8a8a8a"/></svg>
<div class="a" style="left:1536px;top:537px;width:331px;height:42px;background:#3c3c3c;border:1px solid #333;border-radius:4px"></div>
<div class="a" style="left:1536px;top:537px;width:310px;height:42px;background:#53718f;border-radius:4px 0 0 4px;border-top:1px solid #6180a0"></div>
<div class="t" style="left:1635.60px;top:549.72px;font-size:17.7px;color:#e8eef4;font-weight:400;font-family:'Liberation Sans',sans-serif;transform:scaleX(0.9258);">Opacity:  100%</div>
<svg style="left:1847px;top:537px;" width="20" height="42" viewBox="0 0 20 42"><path d="M4 17.0 L10 11.0 L16 17.0Z M4 25.0 L10 31.0 L16 25.0Z" fill="#7a7a7a"/></svg>
<svg style="left:1884px;top:550px;" width="22" height="17" viewBox="0 0 22 17"><path d="M1 2H20M1 8.5H20M1 15H20" stroke="#e6e6e6" stroke-width="2.6"/></svg>
<svg style="left:1906px;top:572px;" width="9" height="8" viewBox="0 0 9 8"><path d="M0 0H9 L4.5 7Z" fill="#8a8a8a"/></svg>
<div class="a" style="left:1536px;top:583px;width:384px;height:215px;background:#383838;"></div>
<div class="a" style="left:1570px;top:585px;width:347px;height:39px;background:#53718f;"></div>
<svg style="left:1538px;top:591px;" width="30" height="28" viewBox="0 0 30 28"><path d="M2 14 Q14 2 26 14" fill="none" stroke="#ececec" stroke-width="1.8"/><path d="M3 16 Q14 27 25 16" fill="none" stroke="#ececec" stroke-width="1.6"/><circle cx="14" cy="12.5" r="6" fill="#ececec"/><circle cx="16" cy="10.5" r="2" fill="#bdbdbd"/></svg>
<div class="a" style="left:1574px;top:590px;width:32px;height:28px;border:2px solid #222;background-color:#fff;background-image:linear-gradient(45deg,#e9e9e9 25%,transparent 25%,transparent 75%,#e9e9e9 75%),linear-gradient(45deg,#e9e9e9 25%,transparent 25%,transparent 75%,#e9e9e9 75%);background-size:12px 12px;background-position:0 0,6px 6px"></div>
<div class="a" style="left:1609px;top:585px;width:2px;height:39px;background:#3f5670;"></div>
<div class="a" style="left:1631px;top:585px;width:2px;height:39px;background:#3f5670;"></div>
<div class="a" style="left:1830px;top:585px;width:2px;height:39px;background:#3f5670;"></div>
<div class="a" style="left:1858px;top:585px;width:2px;height:39px;background:#3f5670;"></div>
<div class="a" style="left:1886px;top:585px;width:2px;height:39px;background:#3f5670;"></div>
<svg style="left:1612px;top:587px;" width="20" height="18" viewBox="0 0 20 18"><path d="M3 4H1.5V1.5H17V13H11" fill="none" stroke="#e0e0e0" stroke-width="1.4"/><path d="M2 3L11 11M6 12H11V7" fill="none" stroke="#e0e0e0" stroke-width="1.4"/></svg>
<div class="t" style="left:1632.69px;top:595.32px;font-size:19px;color:#e2e2e2;font-weight:700;font-family:'Liberation Sans',sans-serif;transform:scaleX(0.9106);">root Merged</div>
<svg style="left:1834px;top:592px;" width="24" height="26" viewBox="0 0 24 26"><path d="M9 9V6.5Q9 2 13.5 2Q18 2 18 6" fill="none" stroke="#7a92aa" stroke-width="2.2"/><rect x="3" y="10" width="19" height="13" rx="1.5" fill="#7a92aa"/></svg>
<div class="t" style="left:1862.00px;top:590.23px;font-size:26px;color:#7a92aa;font-weight:400;font-family:'Liberation Serif',sans-serif;transform:scaleX(1.4286);">α</div>
<svg style="left:1889px;top:590px;" width="28" height="30" viewBox="0 0 28 30"><g fill="#7a92aa"><rect x="9" y="1" width="8" height="8"/><rect x="1" y="9" width="8" height="8"/><rect x="17" y="9" width="8" height="8"/><rect x="9" y="17" width="8" height="8"/><rect x="9" y="9" width="8" height="8" opacity=".5"/><rect x="1" y="1" width="8" height="8" opacity=".5"/><rect x="17" y="1" width="8" height="8" opacity=".5"/><rect x="1" y="17" width="8" height="8" opacity=".5"/><rect x="17" y="17" width="8" height="8" opacity=".5"/></g></svg>
<div class="a" style="left:1536px;top:624px;width:384px;height:1px;background:#2f2f2f;"></div>
<svg style="left:1540px;top:804px;" width="200" height="36" viewBox="0 0 200 36"><path d="M17 4V31 M3.5 17.5H30.5" stroke="#e2e2e2" stroke-width="2.4"/>
<path d="M41 16H54L47.5 22.5Z" fill="#8e8e8e"/>
<rect x="75" y="3.5" width="22" height="23" fill="none" stroke="#e2e2e2" stroke-width="2.4"/><path d="M69.5 9V32H92" fill="none" stroke="#e2e2e2" stroke-width="2.4"/>
<path d="M117 9L131.5 24L146 9" fill="none" stroke="#e2e2e2" stroke-width="2.4"/>
<path d="M164 27L178.5 12L193 27" fill="none" stroke="#e2e2e2" stroke-width="2.4"/></svg>
<svg style="left:1750px;top:808px;" width="34" height="30" viewBox="0 0 34 30"><path d="M1.5 4.5H31 M1.5 12.5H31 M1.5 20.5H31" stroke="#e2e2e2" stroke-width="2.6"/><circle cx="24" cy="4.5" r="3" fill="#e2e2e2"/><circle cx="9" cy="12.5" r="3" fill="#e2e2e2"/><circle cx="19" cy="20.5" r="3" fill="#e2e2e2"/></svg>
<svg style="left:1880px;top:805px;" width="32" height="34" viewBox="0 0 32 34"><path d="M2 6.5H29" stroke="#e2e2e2" stroke-width="2.6"/><path d="M10.5 6V2.5H20.5V6" fill="none" stroke="#e2e2e2" stroke-width="2.2"/><path d="M5 10H26V29Q26 32 23 32H8Q5 32 5 29Z" fill="#e2e2e2"/></svg>
<svg style="left:1716px;top:846px;" width="28" height="4" viewBox="0 0 28 4"><rect x="0.0" y="0.5" width="2.4" height="2.4" fill="#8a8a8a"/><rect x="4.4" y="0.5" width="2.4" height="2.4" fill="#8a8a8a"/><rect x="8.8" y="0.5" width="2.4" height="2.4" fill="#8a8a8a"/><rect x="13.2" y="0.5" width="2.4" height="2.4" fill="#8a8a8a"/><rect x="17.6" y="0.5" width="2.4" height="2.4" fill="#8a8a8a"/><rect x="22.0" y="0.5" width="2.4" height="2.4" fill="#8a8a8a"/></svg>
<svg style="left:1535px;top:852px;" width="26" height="26" viewBox="0 0 26 26"><circle cx="13" cy="13" r="11.5" fill="none" stroke="#dcdcdc" stroke-width="1.6"/><path d="M9 11.5V9Q9 5.5 12.5 5.5Q16 5.5 16 9" fill="none" stroke="#dcdcdc" stroke-width="1.8"/><rect x="6.5" y="11.5" width="12.5" height="7" rx="1" fill="#dcdcdc"/></svg>
<svg style="left:1860px;top:854px;" width="24" height="22" viewBox="0 0 24 22"><rect x="8.5" y="1" width="13" height="11" fill="none" stroke="#e6e6e6" stroke-width="1.6"/><rect x="1" y="9.5" width="12" height="11" fill="#474747" stroke="#e6e6e6" stroke-width="1.6"/></svg>
<svg style="left:1896px;top:857px;" width="18" height="17" viewBox="0 0 18 17"><path d="M1 1L16 16M16 1L1 16" stroke="#e6e6e6" stroke-width="1.7"/></svg>
<div class="t" style="left:1568.65px;top:856.74px;font-size:17.2px;color:#d9d9d9;font-weight:400;font-family:'Liberation Sans',sans-serif;transform:scaleX(0.9459);">Brush Presets</div>
<div class="a" style="left:1536px;top:880px;width:231px;height:32px;background:#3f3f3f;border:1px solid #333;border-radius:4px;box-shadow:inset 0 1px 0 #4b4b4b"></div>
<div class="t" style="left:1542.60px;top:887.74px;font-size:17.2px;color:#d9d9d9;font-weight:400;font-family:'Liberation Sans',sans-serif;transform:scaleX(0.9791);">All</div>
<svg style="left:1744px;top:893px;" width="14" height="8" viewBox="0 0 14 8"><path d="M0 0H14 L7.0 7Z" fill="#9a9a9a"/></svg>
<div class="a" style="left:1770px;top:880px;width:75px;height:32px;background:#3f3f3f;border:1px solid #333;border-radius:4px;box-shadow:inset 0 1px 0 #4b4b4b"></div>
<svg style="left:1776px;top:883px;" width="18" height="26" viewBox="0 0 18 26"><path d="M2 1.5H15V23.5L8.5 17L2 23.5Z" fill="none" stroke="#e2e2e2" stroke-width="2.4" stroke-linejoin="miter"/></svg>
<div class="t" style="left:1800.20px;top:887.74px;font-size:17.2px;color:#d9d9d9;font-weight:400;font-family:'Liberation Sans',sans-serif;transform:scaleX(0.9355);">Tag</div>
<svg style="left:1834px;top:905px;" width="9" height="8" viewBox="0 0 9 8"><path d="M0 0H9 L4.5 7Z" fill="#9a9a9a"/></svg>
<div class="a" style="left:1848px;top:880px;width:34px;height:32px;background:#3f3f3f;border:1px solid #333;border-radius:4px;box-shadow:inset 0 1px 0 #4b4b4b"></div>
<svg style="left:1855px;top:887px;" width="20" height="17" viewBox="0 0 20 17"><path d="M1 2H19M1 8.5H19M1 15H19" stroke="#e6e6e6" stroke-width="2.6"/></svg>
<svg style="left:1886px;top:881px;" width="28" height="28" viewBox="0 0 28 28"><rect x="1.5" y="2" width="23.5" height="24" fill="none" stroke="#e2e2e2" stroke-width="1.3"/><path d="M12 3 L14 5 L12 7 L14 9 L12 11" fill="none" stroke="#e2e2e2" stroke-width="1"/></svg>
<div class="a" style="left:1536px;top:913px;width:362px;height:153px;background:#3b3b3b;"></div>
<div class="a" style="left:1537px;top:914px;width:88px;height:61px;background:#d2d2d2;"></div>
<div class="a" style="left:1627px;top:914px;width:88px;height:61px;background:#d2d2d2;"></div>
<div class="a" style="left:1717px;top:914px;width:88px;height:61px;background:#d2d2d2;"></div>
<div class="a" style="left:1537px;top:977px;width:88px;height:88px;background:#d2d2d2;"></div>
<div class="a" style="left:1627px;top:977px;width:88px;height:88px;background:#d2d2d2;"></div>
<div class="a" style="left:1717px;top:977px;width:88px;height:88px;background:#56728f;"></div>
<div class="a" style="left:1722px;top:982px;width:79px;height:78px;background:#86b8da;"></div>
<svg style="left:1537px;top:914px;overflow:hidden" width="268" height="151" viewBox="0 0 268 151"><defs><pattern id="ck" width="9" height="9" patternUnits="userSpaceOnUse"><rect width="9" height="9" fill="#f2f2f2"/><rect width="4.5" height="4.5" fill="#9c9c9c"/><rect x="4.5" y="4.5" width="4.5" height="4.5" fill="#9c9c9c"/></pattern>
<pattern id="ck2" width="7" height="7" patternUnits="userSpaceOnUse"><rect width="7" height="7" fill="#f2f2f2"/><rect width="3.5" height="3.5" fill="#a0a0a0"/><rect x="3.5" y="3.5" width="3.5" height="3.5" fill="#a0a0a0"/></pattern>
<radialGradient id="blob"><stop offset="0" stop-color="#1e1e1e"/><stop offset=".55" stop-color="#2a2a2a" stop-opacity=".95"/><stop offset="1" stop-color="#555" stop-opacity="0"/></radialGradient>
<radialGradient id="gblob" cx=".4" cy=".4"><stop offset="0" stop-color="#8a8a8a"/><stop offset="1" stop-color="#5c5c5c"/></radialGradient>
<linearGradient id="silver" x1="0" y1="0" x2="1" y2="1"><stop offset="0" stop-color="#f4f4f4"/><stop offset=".5" stop-color="#a8a8a8"/><stop offset="1" stop-color="#e0e0e0"/></linearGradient>
<linearGradient id="strk" x1="0" y1="0" x2="1" y2="0"><stop offset="0" stop-color="#a8d0ec"/><stop offset=".5" stop-color="#4a6a9a"/><stop offset="1" stop-color="#18285a"/></linearGradient>
<linearGradient id="fadeck" x1="0" y1="0" x2="1" y2="0"><stop offset="0" stop-color="#fff" stop-opacity="1"/><stop offset="1" stop-color="#fff" stop-opacity=".2"/></linearGradient>
<mask id="m1"><rect width="88" height="61" fill="url(#fadeck)"/></mask></defs>
<g><path d="M18 22 Q10 48 40 56 Q62 60 82 50 L80 42 Q60 50 45 45 Q30 40 34 22Z" fill="url(#ck)" mask="url(#m1)"/>
<path d="M30 2 L58 1 L62 14 L48 32 L30 20Z" fill="#fafafa" stroke="#c8c8c8" stroke-width=".6"/><path d="M48 32 L62 14 L64 18 L50 35Z" fill="#cfcfcf"/>
<path d="M58 0 L84 0 L68 15 L62 14Z" fill="#2a4a8a"/></g>
<g transform="translate(90 0)"><path d="M27 33 Q26 52 44 54 Q64 54 76 36 L70 32 Q60 47 45 47 Q33 46 33 33Z" fill="url(#ck2)"/>
<path d="M55 0 L88 0 L88 2 L60 21 L50 14Z" fill="#3a5ed0"/><path d="M45 18 L52 10 L60 19 L53 27Z" fill="#f0f0ea" stroke="#bbb" stroke-width=".6"/></g>
<g transform="translate(180 0)"><path d="M8 32 Q20 24 40 36 Q58 44 66 36 L66 52 Q50 58 30 52 Q12 46 8 32Z" fill="url(#ck2)" opacity=".55"/>
<path d="M34 16 Q36 2 60 0 L88 0 L88 6 Q70 26 46 30 Q34 30 34 16Z" fill="url(#gblob)"/></g>
<g transform="translate(0 63)"><circle cx="12" cy="74" r="32" fill="url(#blob)"/>
<path d="M88 2 L88 20 L58 50 L46 45 L38 48 L42 38 L48 32 Z" fill="url(#silver)" stroke="#777" stroke-width=".6"/>
<path d="M54 20 L70 36 L62 44 L48 30Z" fill="#161616"/><path d="M44 15 L49 13 L50 30 L45 32Z" fill="#bbb"/><circle cx="65" cy="45" r="2.5" fill="none" stroke="#666" stroke-width="1.2"/></g>
<g transform="translate(90 63)"><path d="M88 0 L88 14 L56 46 L46 36 L78 0Z" fill="#262626"/><path d="M66 10 L74 2 L78 6 L70 14Z" fill="#555"/>
<path d="M46 36 L56 46 L38 55 L37 53Z" fill="url(#silver)" stroke="#666" stroke-width=".5"/>
<path d="M34 74 Q34 66 44 66 Q66 62 88 53 L88 64 Q66 74 44 78 Q34 80 34 74Z" fill="#1c1c1e"/></g>
<g transform="translate(185 68)"><path d="M75 0 L79 6 L48 38 L40 30Z" fill="#1a2a5a"/><path d="M40 30 L48 38 L28 47Z" fill="#2a3a70"/><path d="M66 3 L71 8" stroke="#4a6aa0" stroke-width="2"/>
<path d="M20 56 Q40 64 78 52 L78 62 Q46 74 20 62Z" fill="url(#strk)"/>
<path d="M5 16 L15 6 L19 10 L9 20 L5 20Z" fill="#1a3060"/></g></svg>
<div class="a" style="left:1898px;top:915px;width:19px;height:151px;background:#3c3c3c;"></div>
<div class="a" style="left:1898px;top:915px;width:19px;height:18px;background:#444;border:1px solid #555"></div>
<svg style="left:1900px;top:919px;" width="16" height="10" viewBox="0 0 16 10"><path d="M2 8 L8 2 L14 8Z" fill="#bdbdbd"/></svg>
<div class="a" style="left:1898px;top:935px;width:19px;height:38px;background:#434343;border:1px solid #555"></div>
<div class="a" style="left:1898px;top:1046px;width:19px;height:19px;background:#444;border:1px solid #555"></div>
<svg style="left:1900px;top:1051px;" width="16" height="10" viewBox="0 0 16 10"><path d="M2 2 L8 8 L14 2Z" fill="#bdbdbd"/></svg>
<div class="a" style="left:1536px;top:1068px;width:245px;height:31px;background:#3a3a3a;border:1px solid #363636;border-radius:4px"></div>
<div class="t" style="left:1539.50px;top:1076.95px;font-size:17.9px;color:#8a8a8a;font-weight:400;font-family:'Liberation Sans',sans-serif;transform:scaleX(0.8702);">Search</div>
<div class="a" style="left:1791px;top:1073px;width:21px;height:20px;background:#3a3a3a;border-radius:2px"></div>
<svg style="left:1793px;top:1074px;" width="18" height="18" viewBox="0 0 18 18"><path d="M3 9 L7.5 15 L14.5 2" fill="none" stroke="#dcdcdc" stroke-width="2.2"/></svg>
<div class="t" style="left:1818.75px;top:1075.95px;font-size:16.6px;color:#d9d9d9;font-weight:400;font-family:'Liberation Sans',sans-serif;transform:scaleX(1.0516);">Filter in Tag</div>
</body></html>
